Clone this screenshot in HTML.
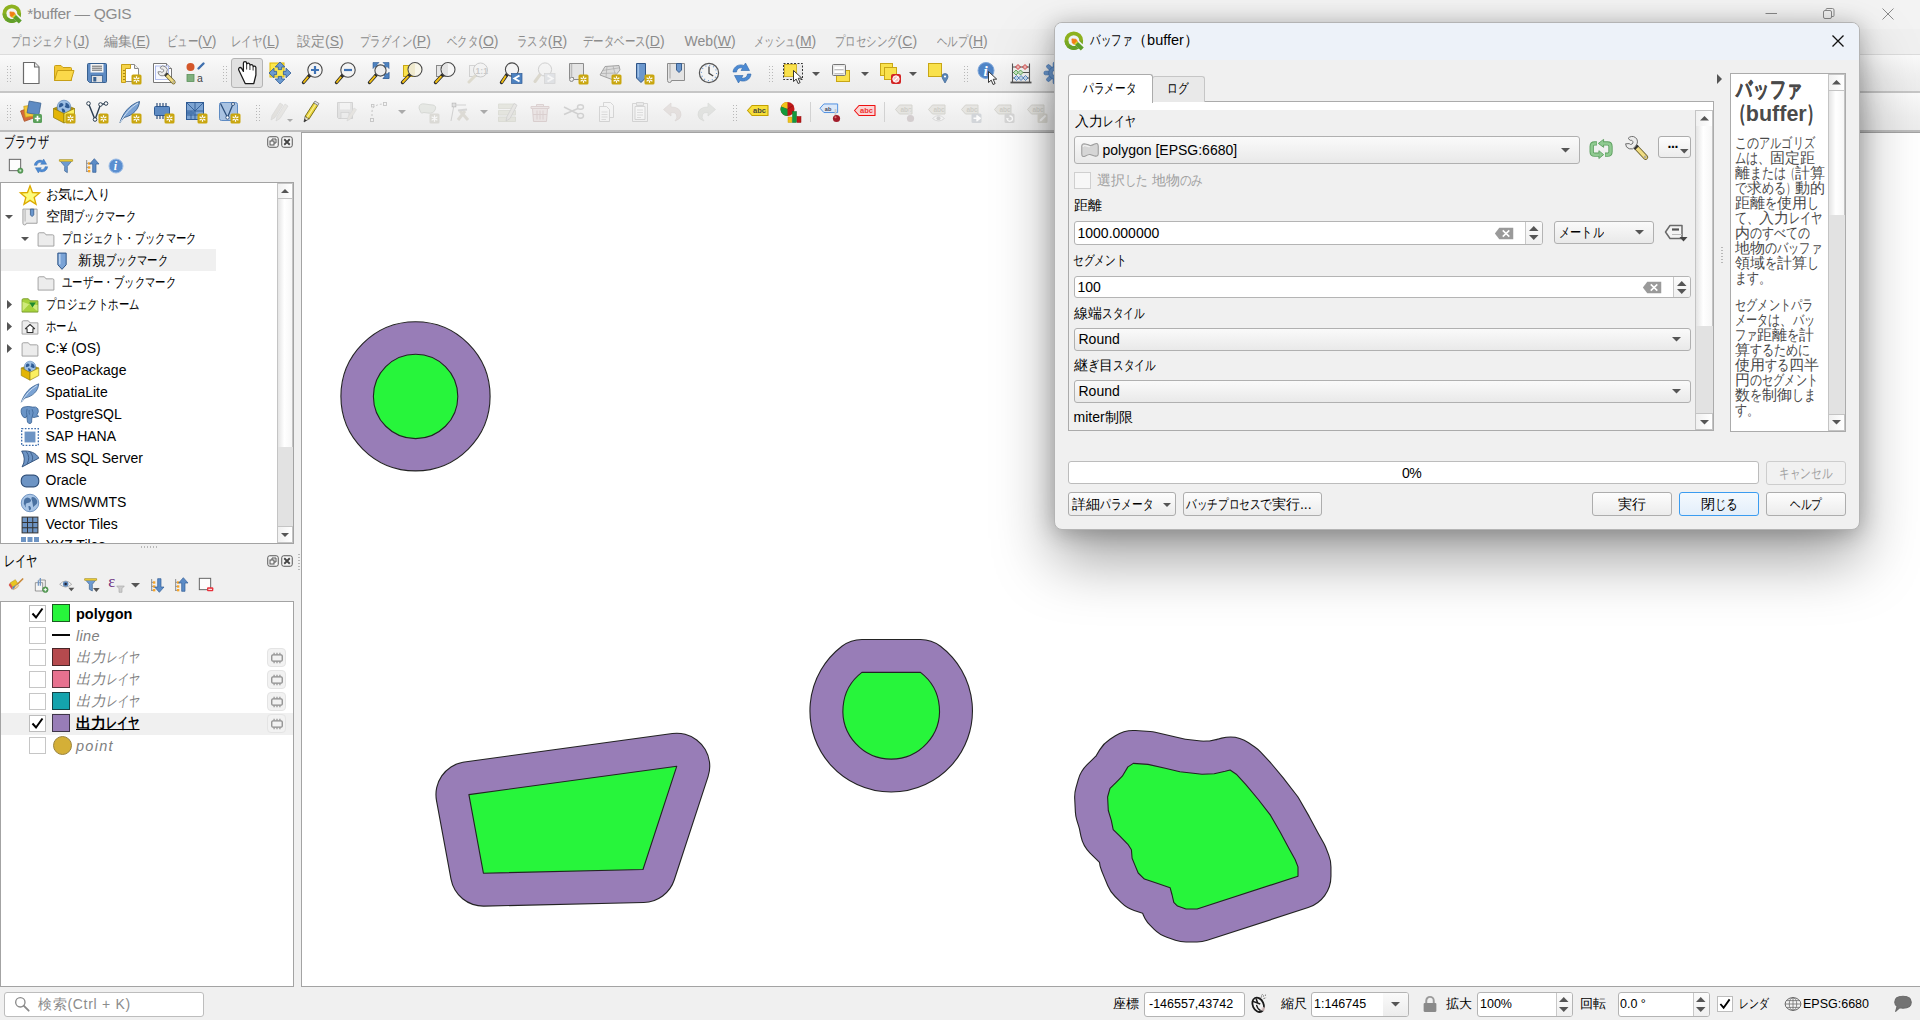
<!DOCTYPE html>
<html lang="ja"><head><meta charset="utf-8"><title>*buffer — QGIS</title>
<style>
html,body{margin:0;padding:0;width:1920px;height:1020px;overflow:hidden;background:#f0f0f0;
 font-family:"Liberation Sans",sans-serif;font-size:14px;color:#000}
.b{position:absolute;box-sizing:border-box}
.t{position:absolute;white-space:nowrap;line-height:20px;height:20px;margin:-1px 0 0 -1px}
.i{position:absolute;overflow:visible}
.k,.h,.p{display:inline-block;transform-origin:0 50%}
.k{transform:scaleX(var(--ks,.76));margin-right:calc((var(--ks,.76) - 1)*var(--n)*1em)}
.h{transform:scaleX(var(--hs,.82));margin-right:calc((var(--hs,.82) - 1)*var(--n)*1em)}
.p{transform:scaleX(.6);margin-right:-.4em}
.mn{--ks:.745}
.tr{--ks:.74;--hs:.885}
.dk,.lb,.li,.lbu{font-size:14.5px;--ks:.745}
.st{font-size:12.5px;--ks:.76}
.lb{font-weight:bold}
.li{font-style:italic;color:#808080}
.lbu,.lbu .k{font-weight:bold;text-decoration:underline}
.dt{font-size:14.5px;--ks:.70}
.dt .p{transform:none;margin-right:0}
.hh{font-size:21.5px;font-weight:bold;color:#4a4a4a;line-height:24px;height:24px;--ks:.70}
.hh .k,.hh .p{font-size:23px;-webkit-text-stroke:.45px #4a4a4a}
.hp{color:#4a4a4a;font-size:14.5px;line-height:15px;height:15px;--ks:.745;--hs:.80}
.hd{position:absolute;width:5px;background-image:radial-gradient(circle,#b8b8b8 0.8px,transparent 1px);background-size:3px 3px}
.gray{color:#8c8c8c}
.dis{color:#a0a0a0}
.btn{border:1px solid #adadad;border-radius:3px;background:linear-gradient(#fdfdfd,#ececec)}
.inp{border:1px solid #b4b4b4;border-radius:3px;background:#fff}
.cmb{border:1px solid #b0b0b0;border-radius:3px;background:linear-gradient(#fafafa,#e9e9e9)}
.sb{background:linear-gradient(90deg,#e4e4e4,#fff 45%,#f6f6f6);border-left:1px solid #c4c4c4;border-right:1px solid #c4c4c4}
.sbt{background:#e2e2e2}
.sbb{background:linear-gradient(90deg,#f0f0f0,#fff);border:1px solid #c4c4c4}
.ck{border:1px solid #b9b9b9;background:#fff}
.ctr{text-align:center}
</style></head><body>

<div class="b " style="left:0px;top:0px;width:1920px;height:29px;background:#f3f3f3"></div>
<svg class="i" style="left:0px;top:2px;" width="24" height="24" viewBox="0 0 24 24"><circle cx="11.800" cy="11.700" r="7.400" fill="none" stroke="#8db11f" stroke-width="3.800"/><path d="M4.400 11.700A7.400 7.400 0 0 0 19.200 11.700" fill="none" stroke="#78a824" stroke-width="3.800"/><path d="M6.600 16.900A7.400 7.400 0 0 0 17 16.900" fill="none" stroke="#62a02a" stroke-width="3.800"/><path d="M14.500 13.200L21.600 20.200" stroke="#f3f4f5" stroke-width="5.800"/><path d="M14 13.900L20.300 20.100" stroke="#5c9e2a" stroke-width="4.200"/><path d="M9.900 9.900L14 10.300 15.300 12.300 12.300 15.300 10.300 14Z" fill="#f07f13" stroke="#f07f13" stroke-width="0.800" stroke-linejoin="round"/><path d="M15.400 12.700L12.700 15.400" stroke="#d9d62e" stroke-width="1.400"/></svg>
<div class="t gray" style="left:28.3px;top:4.5px;font-size:15.5px;letter-spacing:-0.3px">*buffer — QGIS</div>
<svg class="i" style="left:1760px;top:4px" width="140" height="22" viewBox="0 0 140 22" fill="none" stroke="#8a8a8a" stroke-width="1"><path d="M5.5 9.5H17"/><rect x="63.5" y="6.5" width="8" height="8" rx="1.5"/><path d="M66 6.5V5.5Q66 4.5 67 4.5H72.5Q74 4.5 74 6V11.5Q74 12.5 73 12.5H72"/><path d="M122.5 4.5L133.5 15.5M133.5 4.5L122.5 15.5"/></svg>
<div class="b " style="left:0px;top:29px;width:1920px;height:25px;background:#f0f0f0"></div>
<div class="t gray mn" style="left:11.5px;top:31.5px;"><span class="k" style="--n:6">プロジェクト</span>(<u>J</u>)</div>
<div class="t gray mn" style="left:104.5px;top:31.5px;">編集(<u>E</u>)</div>
<div class="t gray mn" style="left:167.5px;top:31.5px;"><span class="k" style="--n:3">ビュー</span>(<u>V</u>)</div>
<div class="t gray mn" style="left:232px;top:31.5px;"><span class="k" style="--n:3">レイヤ</span>(<u>L</u>)</div>
<div class="t gray mn" style="left:298px;top:31.5px;">設定(<u>S</u>)</div>
<div class="t gray mn" style="left:361px;top:31.5px;"><span class="k" style="--n:5">プラグイン</span>(<u>P</u>)</div>
<div class="t gray mn" style="left:448px;top:31.5px;"><span class="k" style="--n:3">ベクタ</span>(<u>O</u>)</div>
<div class="t gray mn" style="left:517.5px;top:31.5px;"><span class="k" style="--n:3">ラスタ</span>(<u>R</u>)</div>
<div class="t gray mn" style="left:583.5px;top:31.5px;"><span class="k" style="--n:6">データベース</span>(<u>D</u>)</div>
<div class="t gray mn" style="left:685.5px;top:31.5px;">Web(<u>W</u>)</div>
<div class="t gray mn" style="left:754.5px;top:31.5px;"><span class="k" style="--n:4">メッシュ</span>(<u>M</u>)</div>
<div class="t gray mn" style="left:836px;top:31.5px;"><span class="k" style="--n:6">プロセシング</span>(<u>C</u>)</div>
<div class="t gray mn" style="left:938px;top:31.5px;"><span class="k" style="--n:3">ヘルプ</span>(<u>H</u>)</div>
<div class="b " style="left:0px;top:54px;width:1920px;height:39px;background:linear-gradient(#fafafa,#f0f0f0 60%,#ececec);border-top:1px solid #dcdcdc;border-bottom:2px solid #c6c6c6"></div>
<div class="b " style="left:0px;top:93px;width:1920px;height:39px;background:linear-gradient(#fafafa,#f0f0f0 60%,#ececec);border-bottom:2px solid #bdbdbd"></div>
<div class="hd" style="left:6px;top:65px;height:17px"></div>
<div class="hd" style="left:222px;top:65px;height:17px"></div>
<div class="hd" style="left:768px;top:65px;height:17px"></div>
<div class="hd" style="left:963px;top:65px;height:17px"></div>
<div class="b " style="left:231px;top:58px;width:32px;height:30px;background:#e1e1e1;border:1px solid #b4b4b4;border-radius:3px"></div>
<svg class="i" style="left:19px;top:61px;" width="24" height="24" viewBox="0 0 24 24"><path d="M4.500 1.500H15.500L20 6V22.500H4.500Z" fill="#fff" stroke="#6a6a6a" stroke-width="1.2" stroke-linejoin="round"/><path d="M15.500 1.500V6H20" fill="#ececec" stroke="#6a6a6a" stroke-width="1.100" stroke-linejoin="round"/></svg>
<svg class="i" style="left:52px;top:61px;" width="24" height="24" viewBox="0 0 24 24"><path d="M2.5 5.5Q2.5 4.5 3.5 4.5H9L11 6.5H18.5Q19.5 6.5 19.5 7.5V19.5H2.5Z" fill="#f3c832" stroke="#c79f16" stroke-width="1"/><path d="M2.5 19.5L5.5 9.5H22L19 19.5Z" fill="#fbd94a" stroke="#c79f16" stroke-width="1" stroke-linejoin="round"/></svg>
<svg class="i" style="left:85px;top:61px;" width="24" height="24" viewBox="0 0 24 24"><path d="M3.5 2.5H20.5Q21.5 2.5 21.5 3.5V20.5Q21.5 21.5 20.5 21.5H4.5L2.5 19.5V3.5Q2.5 2.5 3.5 2.5Z" fill="#5e8bc3" stroke="#38608f" stroke-width="1"/><rect x="5.5" y="3" width="13" height="8.5" fill="#f4f4f4"/><path d="M7 5.2H17M7 7.2H17M7 9.2H17" stroke="#555" stroke-width="0.9"/><rect x="6.5" y="14.5" width="11" height="7" fill="#e3e3e3" stroke="#38608f" stroke-width="0.8"/><rect x="8.3" y="16" width="3" height="4.5" fill="#38608f"/></svg>
<svg class="i" style="left:118px;top:61px;" width="24" height="24" viewBox="0 0 24 24"><path d="M6.5 3.5H16.5L20.5 7.5V20.5H6.5Z" fill="#fff" stroke="#8a8a8a" stroke-width="1"/><path d="M16.5 3.5V7.5H20.5" fill="#eee" stroke="#8a8a8a"/><path d="M3.5 3.5H12.5V7.5H7.5V21.5H3.5Z" fill="#f6d44a" stroke="#c79f16" stroke-width="1"/><path d="M5 9.5H7M5 12.5H7M5 15.5H7M5 18.5H7" stroke="#a07e10" stroke-width="0.9"/><rect x="13.5" y="13.5" width="10" height="10" rx="1.6" fill="#c9a60f"/><path d="M18.5 15.2V21.8M15.6 16.8L21.4 20.2M21.4 16.8L15.6 20.2" stroke="#fff" stroke-width="1.3"/><circle cx="18.5" cy="18.5" r="1" fill="#c9a60f"/></svg>
<svg class="i" style="left:151px;top:61px;" width="24" height="24" viewBox="0 0 24 24"><path d="M2.5 2.5H15.5L20.5 7.5V21.5H2.5Z" fill="#fff" stroke="#777" stroke-width="1"/><path d="M15.5 2.5V7.5H20.5" fill="#eee" stroke="#777" stroke-width="1" stroke-linejoin="round"/><rect x="4.5" y="5" width="13" height="13.5" fill="#f6f8ff" stroke="#aab8ee" stroke-width="0.9"/><g transform="translate(6.5,5.5) scale(.78)"><path d="M11.6 10.8L20.6 20.2" stroke="#6b5f2a" stroke-width="5.2" stroke-linecap="round"/><path d="M11.6 10.8L20.6 20.2" stroke="#f0dc82" stroke-width="3.4" stroke-linecap="round"/><path d="M10 9.2L12 11.2" stroke="#333" stroke-width="5.2"/><circle cx="20.3" cy="19.9" r="0.9" fill="#d9d9d9" stroke="#777" stroke-width="0.5"/><path d="M3.1 1.4A5.2 5.2 0 0 1 11.3 8L10 9.9A5.2 5.2 0 0 1 0.6 6.8L4.2 6.6A2.1 2.1 0 1 0 5.2 3.3Z" fill="#ececec" stroke="#6e6e6e" stroke-width="1" stroke-linejoin="round"/></g></svg>
<svg class="i" style="left:184px;top:61px;" width="24" height="24" viewBox="0 0 24 24"><circle cx="6.5" cy="6" r="4" fill="#d4572a"/><path d="M14.5 7.5L19.5 2.5" stroke="#3f6fae" stroke-width="2.4" stroke-linecap="round"/><rect x="3" y="13.5" width="7" height="7" fill="#7fb07d" stroke="#5b915a" stroke-width="0.8"/><text x="13" y="20.5" font-family="Liberation Sans,sans-serif" font-size="10.5" fill="#444">a</text></svg>
<svg class="i" style="left:235px;top:61px;" width="24" height="24" viewBox="0 0 24 24"><path d="M10.2 22.5L4 9.5Q3 7.800 4.600 6.600Q5.800 6.200 6.600 7.400L8.400 10.400V2Q8.400 0.500 10 0.500Q11.600 0.500 11.600 2V3Q13.600 1.200 14.900 3.400V4.200Q16.900 2.600 18.100 4.800V5.600Q20 4.400 20.900 6.400V14L18.800 22.500Z" fill="#fff" stroke="#1a1a1a" stroke-width="1.25" stroke-linejoin="round"/><path d="M11.600 3V8.500M14.900 4.400V9M18.100 5.800V9.500" stroke="#444" stroke-width="1.1"/></svg>
<svg class="i" style="left:268px;top:61px;" width="24" height="24" viewBox="0 0 24 24"><rect x="2" y="2" width="14" height="14" fill="#fbe74d" stroke="#e0b800" stroke-width="1"/><g fill="#6c9bd0" stroke="#2f5b94" stroke-width="0.8" stroke-linejoin="round"><path d="M12 1L16.800 6H13.700V8.600H10.300V6H7.200Z"/><path d="M12 23L16.800 18H13.700V15.400H10.300V18H7.200Z"/><path d="M1 12L6 7.200V10.300H8.600V13.700H6V16.800Z"/><path d="M23 12L18 7.200V10.300H15.400V13.700H18V16.800Z"/></g></svg>
<svg class="i" style="left:301px;top:61px;" width="24" height="24" viewBox="0 0 24 24"><path d="M8.816 14.184L2.5 21.5" stroke="#2b2b2b" stroke-width="3.4" stroke-linecap="round"/><path d="M7.52 15.48L3 21" stroke="#f3c012" stroke-width="1.9" stroke-linecap="round"/><path d="M9.68 13.32L7.16 15.84" stroke="#2b2b2b" stroke-width="2.6"/><circle cx="14" cy="9" r="7.2" fill="#f4f4f4" stroke="#4a4a4a" stroke-width="1.1"/><path d="M14 5V13M10 9H18" stroke="#3f73b5" stroke-width="2.2"/></svg>
<svg class="i" style="left:334px;top:61px;" width="24" height="24" viewBox="0 0 24 24"><path d="M8.816 14.184L2.5 21.5" stroke="#2b2b2b" stroke-width="3.4" stroke-linecap="round"/><path d="M7.52 15.48L3 21" stroke="#f3c012" stroke-width="1.9" stroke-linecap="round"/><path d="M9.68 13.32L7.16 15.84" stroke="#2b2b2b" stroke-width="2.6"/><circle cx="14" cy="9" r="7.2" fill="#f4f4f4" stroke="#4a4a4a" stroke-width="1.1"/><path d="M10 9H18" stroke="#3f73b5" stroke-width="2.2"/></svg>
<svg class="i" style="left:367px;top:61px;" width="24" height="24" viewBox="0 0 24 24"><g fill="#4d82c0" stroke="#2f5b94" stroke-width="0.6"><path d="M6 1.5H12L10 3.5 12.5 6 10.5 8 8 5.5 6 7.5Z"/><path d="M22 1.5H16L18 3.5 15.5 6 17.5 8 20 5.5 22 7.5Z"/><path d="M22 17.5H16L18 15.5 15.5 13 17.5 11 20 13.5 22 11.5Z" transform="translate(0,0)"/><path d="M22 17.5V11.5L20 13.5 17.5 11 15.5 13 18 15.5 16 17.5Z"/></g><path d="M9.468 13.532L2.5 21.5" stroke="#2b2b2b" stroke-width="3.4" stroke-linecap="round"/><path d="M8.46 14.54L3 21" stroke="#f3c012" stroke-width="1.9" stroke-linecap="round"/><path d="M10.14 12.86L8.18 14.82" stroke="#2b2b2b" stroke-width="2.6"/><circle cx="13.5" cy="9.5" r="5.6" fill="#ededed" stroke="#4a4a4a" stroke-width="1.1"/></svg>
<svg class="i" style="left:400px;top:61px;" width="24" height="24" viewBox="0 0 24 24"><rect x="3.5" y="4.5" width="11" height="11" fill="#f9e14b" stroke="#c8a616" stroke-width="1"/><path d="M9.96 13.54L2.5 21.5" stroke="#2b2b2b" stroke-width="3.4" stroke-linecap="round"/><path d="M8.7 14.8L3 21" stroke="#f3c012" stroke-width="1.9" stroke-linecap="round"/><path d="M10.8 12.7L8.35 15.15" stroke="#2b2b2b" stroke-width="2.6"/><circle cx="15" cy="8.5" r="7" fill="#f8f6ea" stroke="#4a4a4a" stroke-width="1.1"/><path d="M15 2.3A6.2 6.2 0 0 0 15 14.7Z" fill="#ece6c4" opacity=".8"/></svg>
<svg class="i" style="left:433px;top:61px;" width="24" height="24" viewBox="0 0 24 24"><rect x="3.5" y="4.5" width="11" height="11" fill="#e6e6e6" stroke="#8a8a8a" stroke-width="1"/><path d="M9.96 13.54L2.5 21.5" stroke="#2b2b2b" stroke-width="3.4" stroke-linecap="round"/><path d="M8.7 14.8L3 21" stroke="#f3c012" stroke-width="1.9" stroke-linecap="round"/><path d="M10.8 12.7L8.35 15.15" stroke="#2b2b2b" stroke-width="2.6"/><circle cx="15" cy="8.5" r="7" fill="#f6f6f6" stroke="#4a4a4a" stroke-width="1.1"/><path d="M15 2.3A6.2 6.2 0 0 0 15 14.7Z" fill="#dedede" opacity=".8"/></svg>
<svg class="i" style="left:466px;top:61px;" width="24" height="24" viewBox="0 0 24 24"><g opacity=".45"><rect x="3.5" y="4.5" width="11" height="11" fill="#eee" stroke="#aaa" stroke-width="1"/><path d="M9 15L3 21" stroke="#c9c2a8" stroke-width="3" stroke-linecap="round"/><circle cx="14.5" cy="9" r="7" fill="#f2f2f2" stroke="#999" stroke-width="1"/><text x="9.6" y="12.5" font-family="Liberation Sans,sans-serif" font-weight="bold" font-size="8.5" fill="#999">1:1</text></g></svg>
<svg class="i" style="left:499px;top:61px;" width="24" height="24" viewBox="0 0 24 24"><path d="M8.248 13.252L2.5 21.5" stroke="#2b2b2b" stroke-width="3.4" stroke-linecap="round"/><path d="M7.06 14.44L3 21" stroke="#f3c012" stroke-width="1.9" stroke-linecap="round"/><path d="M9.04 12.46L6.73 14.77" stroke="#2b2b2b" stroke-width="2.6"/><circle cx="13" cy="8.5" r="6.6" fill="#f4f4f4" stroke="#4a4a4a" stroke-width="1.1"/><rect x="12.5" y="12.5" width="10.5" height="10" fill="#4d82c0" stroke="#2f5b94" stroke-width="0.7"/><path d="M20.5 14.5L15.5 17.5 20.5 20.5" stroke="#fff" stroke-width="2" fill="none"/></svg>
<svg class="i" style="left:532px;top:61px;" width="24" height="24" viewBox="0 0 24 24"><g opacity=".4"><path d="M8.5 13L3 20.5" stroke="#bdb59a" stroke-width="3" stroke-linecap="round"/><circle cx="13" cy="8.5" r="6.6" fill="#f3f3f3" stroke="#999" stroke-width="1"/><rect x="12.5" y="12.5" width="10.5" height="10" fill="#c9ced6" stroke="#aaa" stroke-width="0.7"/><path d="M15.5 14.5L20.5 17.5 15.5 20.5" stroke="#fff" stroke-width="2" fill="none"/></g></svg>
<svg class="i" style="left:565px;top:61px;" width="24" height="24" viewBox="0 0 24 24"><path d="M4.5 2.5H18.5V18.5H8.5Q8.5 20.5 6.5 20.5Q4.5 20.5 4.5 18.5Z" fill="#e4e4e4" stroke="#8c8c8c" stroke-width="1"/><path d="M4.5 18.5Q4.5 16.5 6.5 16.5H8.5V18.5" fill="#f4f4f4" stroke="#8c8c8c"/><path d="M6.5 3V16" stroke="#bbb" stroke-width="1.5"/><rect x="13.5" y="13.5" width="10" height="10" rx="1.6" fill="#c9a60f"/><path d="M18.5 15.2V21.8M15.6 16.8L21.4 20.2M21.4 16.8L15.6 20.2" stroke="#fff" stroke-width="1.3"/><circle cx="18.5" cy="18.5" r="1" fill="#c9a60f"/></svg>
<svg class="i" style="left:598px;top:61px;" width="24" height="24" viewBox="0 0 24 24"><path d="M2 14L7 5.5 21 4.5 22 9 14 18.5Z" fill="#dcdcdc" stroke="#9a9a9a" stroke-width="0.9"/><path d="M4.5 9.5L21.5 6.8M3 12.5L18 12M9 5.3L8 16M15 4.9L17.5 14.5" stroke="#aaa" stroke-width="0.7" fill="none"/><rect x="13.5" y="13.5" width="10" height="10" rx="1.6" fill="#c9a60f"/><path d="M18.5 15.2V21.8M15.6 16.8L21.4 20.2M21.4 16.8L15.6 20.2" stroke="#fff" stroke-width="1.3"/><circle cx="18.5" cy="18.5" r="1" fill="#c9a60f"/></svg>
<svg class="i" style="left:631px;top:61px;" width="24" height="24" viewBox="0 0 24 24"><path d="M5.5 2.5H14.5V17L10 21.5 5.5 17Z" fill="#6b97cd" stroke="#2f5587" stroke-width="1"/><path d="M7.3 3.2V16.3" stroke="#9fc0e6" stroke-width="1.6"/><rect x="13.5" y="13.5" width="10" height="10" rx="1.6" fill="#c9a60f"/><path d="M18.5 15.2V21.8M15.6 16.8L21.4 20.2M21.4 16.8L15.6 20.2" stroke="#fff" stroke-width="1.3"/><circle cx="18.5" cy="18.5" r="1" fill="#c9a60f"/></svg>
<svg class="i" style="left:664px;top:61px;" width="24" height="24" viewBox="0 0 24 24"><path d="M3.5 2.5H20.5V19.5H7.5Q7.5 21.5 5.5 21.5Q3.5 21.5 3.5 19.5Z" fill="#e4e4e4" stroke="#8c8c8c" stroke-width="1"/><path d="M6 3V17.5" stroke="#bbb" stroke-width="1.6"/><path d="M12.5 2.5H17.5V9L15 11.5 12.5 9Z" fill="#6b97cd" stroke="#2f5587" stroke-width="0.9"/></svg>
<svg class="i" style="left:697px;top:61px;" width="24" height="24" viewBox="0 0 24 24"><circle cx="12" cy="12" r="9.6" fill="#f4f4f4" stroke="#555" stroke-width="1.2"/><circle cx="12" cy="12" r="7.6" fill="none" stroke="#6b97cd" stroke-width="1.2" stroke-dasharray="1 2.98"/><path d="M12 5.5V12.3L16.2 15" stroke="#444" stroke-width="1.3" fill="none"/></svg>
<svg class="i" style="left:730px;top:61px;" width="24" height="24" viewBox="0 0 24 24"><g fill="#4c8ad3" stroke="#2f66a8" stroke-width="0.6" stroke-linejoin="round"><path d="M3 11C3.5 5.5 9 2.5 14 4.5L15.5 2 19.5 9.5 11 9.5 12.5 7.2C9.5 6 6.8 8 6.5 11Z"/><path d="M21 13C20.5 18.5 15 21.5 10 19.5L8.5 22 4.5 14.5 13 14.5 11.5 16.8C14.5 18 17.2 16 17.5 13Z"/></g></svg>
<svg class="i" style="left:781px;top:61px;" width="24" height="24" viewBox="0 0 24 24"><rect x="2.5" y="2.5" width="19" height="16" fill="#e9e9e9" stroke="#333" stroke-width="1" stroke-dasharray="2 1.5"/><rect x="3.5" y="3.5" width="12" height="12" fill="#f9e14b" stroke="#c8a616" stroke-width="0.8"/><g transform="translate(12.5,9.5)"><path d="M0 0L0 11 2.7 8.6 4.6 13 6.6 12.1 4.7 7.8 8.2 7.6Z" fill="#fff" stroke="#222" stroke-width="0.9" stroke-linejoin="round"/></g></svg>
<svg class="i" style="left:812px;top:71.5px" width="8" height="4" viewBox="0 0 8 4"><path d="M0 0H8L4 4Z" fill="#555"/></svg>
<svg class="i" style="left:829px;top:61px;" width="24" height="24" viewBox="0 0 24 24"><rect x="7.5" y="9.5" width="13" height="11" fill="#f9e14b" stroke="#c8a616" stroke-width="1"/><rect x="3.5" y="3.5" width="13" height="11" rx="1" fill="#e8e8e8" stroke="#777" stroke-width="1"/><path d="M5.5 7H14.5M5.5 11H14.5" stroke="#fff" stroke-width="2.6"/><path d="M5.5 7H14.5M5.5 11H14.5" stroke="#999" stroke-width="0.6" fill="none" transform="translate(0,1.6)"/></svg>
<svg class="i" style="left:860.5px;top:71.5px" width="8" height="4" viewBox="0 0 8 4"><path d="M0 0H8L4 4Z" fill="#555"/></svg>
<svg class="i" style="left:878px;top:61px;" width="24" height="24" viewBox="0 0 24 24"><rect x="2.5" y="2.5" width="12" height="12" fill="#f9e14b" stroke="#c8a616" stroke-width="1"/><rect x="6.5" y="6.5" width="12" height="12" fill="#f9e14b" stroke="#c8a616" stroke-width="1"/><rect x="13" y="13" width="10" height="10" rx="2" fill="#d32424"/><circle cx="18" cy="18" r="3.2" fill="#f5c0c0" stroke="#fff" stroke-width="1"/><path d="M15.8 20.2L20.2 15.8" stroke="#fff" stroke-width="1.2"/></svg>
<svg class="i" style="left:908.5px;top:71.5px" width="8" height="4" viewBox="0 0 8 4"><path d="M0 0H8L4 4Z" fill="#555"/></svg>
<svg class="i" style="left:925.5px;top:61px;" width="24" height="24" viewBox="0 0 24 24"><rect x="2.5" y="2.5" width="13" height="13" fill="#f9e14b" stroke="#c8a616" stroke-width="1"/><path d="M19 22C17 18.5 16 17 16 15.5A3 3 0 0 1 22 15.5C22 17 21 18.5 19 22Z" fill="#5b87b8" stroke="#3b6393" stroke-width="0.7"/><circle cx="19" cy="15.5" r="1.1" fill="#fff"/></svg>
<svg class="i" style="left:975.5px;top:61px;" width="24" height="24" viewBox="0 0 24 24"><circle cx="10" cy="9.5" r="8" fill="#4f84c6" stroke="#7ea6da" stroke-width="1"/><text x="7.6" y="15" font-family="Liberation Serif,serif" font-style="italic" font-weight="bold" font-size="15" fill="#fff">i</text><g transform="translate(12.5,10.5)"><path d="M0 0L0 11 2.7 8.6 4.6 13 6.6 12.1 4.7 7.8 8.2 7.6Z" fill="#fff" stroke="#222" stroke-width="0.9" stroke-linejoin="round"/></g></svg>
<svg class="i" style="left:1009px;top:61px;" width="24" height="24" viewBox="0 0 24 24"><path d="M3.5 2.5V21M20.5 2.5V21M3.5 6H20.5M3.5 11.5H20.5M3.5 17H20.5" stroke="#555" stroke-width="1.1" fill="none"/><path d="M1.5 21.5H22.5" stroke="#555" stroke-width="1.8"/><g stroke-width="0.8"><g fill="#f0b6b6" stroke="#c22"><path d="M9 3.5L11.5 6 9 8.5 6.5 6Z"/><path d="M16 3.5L18.5 6 16 8.5 13.5 6Z"/></g><g fill="#c4e6c0" stroke="#4a9a44"><path d="M7 9L9.5 11.5 7 14 4.5 11.5Z"/><path d="M11.5 9L14 11.5 11.5 14 9 11.5Z"/></g><g fill="#c3d9ef" stroke="#3f73b5"><path d="M7.5 14.5L10 17 7.5 19.5 5 17Z"/><path d="M12 14.5L14.5 17 12 19.5 9.5 17Z"/><path d="M16.5 14.5L19 17 16.5 19.5 14 17Z"/></g></g></svg>
<svg class="i" style="left:1042px;top:61px;" width="24" height="24" viewBox="0 0 24 24"><g transform="translate(13,12)"><g fill="#6d9ad1" stroke="#3f73b5" stroke-width="0.7"><rect x="-1.8" y="-11" width="3.6" height="22" rx="1.5"/><rect x="-1.8" y="-11" width="3.6" height="22" rx="1.5" transform="rotate(45)"/><rect x="-1.8" y="-11" width="3.6" height="22" rx="1.5" transform="rotate(90)"/><rect x="-1.8" y="-11" width="3.6" height="22" rx="1.5" transform="rotate(135)"/></g><circle r="6.3" fill="#6d9ad1" stroke="#3f73b5" stroke-width="0.7"/><circle r="2.8" fill="#f2f2f2" stroke="#3f73b5" stroke-width="0.7"/></g></svg>
<div class="hd" style="left:6px;top:104px;height:17px"></div>
<div class="hd" style="left:255px;top:104px;height:17px"></div>
<div class="hd" style="left:732px;top:104px;height:17px"></div>
<svg class="i" style="left:19px;top:100px;" width="24" height="24" viewBox="0 0 24 24"><rect x="3" y="9" width="11" height="11" fill="#d46a3a" stroke="#a94c22" stroke-width="0.7" transform="rotate(-20 8 14)"/><rect x="5.5" y="5.5" width="11" height="11" fill="#f5c83a" stroke="#c79f16" stroke-width="0.7" transform="rotate(-8 11 11)"/><rect x="9" y="2" width="12" height="12" fill="#5e8bc3" stroke="#38608f" stroke-width="0.7" transform="rotate(10 15 8)"/><rect x="14" y="14" width="9" height="9" rx="1.5" fill="#5aa05a"/><path d="M18.5 15.7V21.3M15.7 18.5H21.3" stroke="#fff" stroke-width="1.7"/></svg>
<svg class="i" style="left:52px;top:100px;" width="24" height="24" viewBox="0 0 24 24"><path d="M1.500 8.500L12 4.500 22.500 8.500 12 13.500Z" fill="#b8930c" stroke="#94800f" stroke-width="0.8" stroke-linejoin="round"/><circle cx="12" cy="7" r="6.800" fill="#9dbfe4" stroke="#5e86b8" stroke-width="0.7"/><path d="M7.500 3.800Q9.500 2.300 11 3.800T9.500 6.800 7 6ZM13.500 2.800Q16.500 3 17.500 6T15 8 13.500 5.500ZM9.500 8.800Q12 8 13 10.500T10.500 12.500Z" fill="#2f5b94"/><path d="M1.500 8.500L12 13.500V23L1.500 17.500Z" fill="#e3b505" stroke="#94800f" stroke-width="0.8" stroke-linejoin="round"/><path d="M22.500 8.500L12 13.500V23L22.500 17.500Z" fill="#fbef60" stroke="#94800f" stroke-width="0.8" stroke-linejoin="round"/><rect x="13.5" y="13.5" width="10" height="10" rx="1.6" fill="#c9a60f"/><path d="M18.5 15.2V21.8M15.6 16.8L21.4 20.2M21.4 16.8L15.6 20.2" stroke="#fff" stroke-width="1.3"/><circle cx="18.5" cy="18.5" r="1" fill="#c9a60f"/></svg>
<svg class="i" style="left:85px;top:100px;" width="24" height="24" viewBox="0 0 24 24"><path d="M3.5 3.5L10 19.5 15.5 4.5 21 3.5" fill="none" stroke="#2c3e50" stroke-width="1.4"/><g fill="#fff" stroke="#2c3e50" stroke-width="1"><circle cx="3.5" cy="3.5" r="1.8"/><circle cx="10" cy="19.5" r="1.8"/><circle cx="15.5" cy="4.5" r="1.8"/><circle cx="21" cy="3.5" r="1.8"/></g><rect x="13.5" y="13.5" width="10" height="10" rx="1.6" fill="#c9a60f"/><path d="M18.5 15.2V21.8M15.6 16.8L21.4 20.2M21.4 16.8L15.6 20.2" stroke="#fff" stroke-width="1.3"/><circle cx="18.5" cy="18.5" r="1" fill="#c9a60f"/></svg>
<svg class="i" style="left:118px;top:100px;" width="24" height="24" viewBox="0 0 24 24"><path d="M2 22.5C5 13 11 5 21.5 1.5C21 9 15 15.5 6 17.5Z" fill="#7ba3d4" stroke="#345c8c" stroke-width="0.9" stroke-linejoin="round"/><path d="M2.5 22C7 14 12 8 20 3" stroke="#d8e6f5" stroke-width="1" fill="none"/><rect x="13.5" y="13.5" width="10" height="10" rx="1.6" fill="#c9a60f"/><path d="M18.5 15.2V21.8M15.6 16.8L21.4 20.2M21.4 16.8L15.6 20.2" stroke="#fff" stroke-width="1.3"/><circle cx="18.5" cy="18.5" r="1" fill="#c9a60f"/></svg>
<svg class="i" style="left:151px;top:100px;" width="24" height="24" viewBox="0 0 24 24"><rect x="3.5" y="6.5" width="15" height="9" rx="1" fill="#5e8bc3" stroke="#2f5b94" stroke-width="1"/><path d="M6 3V6.5M9 3V6.5M12 3V6.5M15 3V6.5M6 15.5V19M9 15.5V19M12 15.5V19" stroke="#2f4f7a" stroke-width="1.2"/><rect x="13.5" y="13.5" width="10" height="10" rx="1.6" fill="#c9a60f"/><path d="M18.5 15.2V21.8M15.6 16.8L21.4 20.2M21.4 16.8L15.6 20.2" stroke="#fff" stroke-width="1.3"/><circle cx="18.5" cy="18.5" r="1" fill="#c9a60f"/></svg>
<svg class="i" style="left:184px;top:100px;" width="24" height="24" viewBox="0 0 24 24"><rect x="2.5" y="2.5" width="17" height="17" fill="#7da4d2" stroke="#2f5b94" stroke-width="1"/><path d="M11 2.5V19.5M2.5 11H19.5M2.5 2.5L11 11M19.5 2.5L11 11M2.5 15H19.5M7 11V19.5" stroke="#2f5b94" stroke-width="0.9" fill="none"/><rect x="3" y="11.5" width="7.5" height="3" fill="#4a78b0"/><rect x="13.5" y="13.5" width="10" height="10" rx="1.6" fill="#c9a60f"/><path d="M18.5 15.2V21.8M15.6 16.8L21.4 20.2M21.4 16.8L15.6 20.2" stroke="#fff" stroke-width="1.3"/><circle cx="18.5" cy="18.5" r="1" fill="#c9a60f"/></svg>
<svg class="i" style="left:217px;top:100px;" width="24" height="24" viewBox="0 0 24 24"><rect x="2.5" y="2.5" width="18" height="18" rx="2" fill="#a9c3e2" stroke="#5e8bc3" stroke-width="1"/><path d="M3.5 3.5L10.5 17.5 16 4" fill="none" stroke="#2c4f7c" stroke-width="1.3"/><g fill="#fff" stroke="#2c4f7c" stroke-width="0.9"><circle cx="10.5" cy="17.5" r="1.7"/><circle cx="16" cy="4" r="1.5"/></g><rect x="13.5" y="13.5" width="10" height="10" rx="1.6" fill="#c9a60f"/><path d="M18.5 15.2V21.8M15.6 16.8L21.4 20.2M21.4 16.8L15.6 20.2" stroke="#fff" stroke-width="1.3"/><circle cx="18.5" cy="18.5" r="1" fill="#c9a60f"/></svg>
<svg class="i" style="left:267px;top:100px;" width="24" height="24" viewBox="0 0 24 24"><g opacity=".5"><path d="M4 20L5 15.5 13 3 16 5 8 17.5Z" fill="#d5d2cc" stroke="#bbb" stroke-width="0.6"/><path d="M9 21L10 16.5 18 4 21 6 13 18.5Z" fill="#dcdad5" stroke="#bbb" stroke-width="0.6"/></g></svg>
<svg class="i" style="left:286.5px;top:119px" width="6" height="3" viewBox="0 0 6 3"><path d="M0 0H6L3 3Z" fill="#aaa"/></svg>
<svg class="i" style="left:300.5px;top:100px;" width="24" height="24" viewBox="0 0 24 24"><path d="M3 22L4.2 16.2 8.2 18.8Z" fill="#e8e0c8" stroke="#555" stroke-width="0.8" stroke-linejoin="round"/><path d="M3 22L3.7 18.9 5.6 20.2Z" fill="#222"/><path d="M4.2 16.2L12.8 2.8 16.8 5.4 8.2 18.8Z" fill="#ebd53a" stroke="#6e6414" stroke-width="0.9" stroke-linejoin="round"/><path d="M6.2 17.4L14.8 4.1" stroke="#f8ef9c" stroke-width="1.1"/><path d="M12.8 2.8L14 1 18 3.6 16.8 5.4Z" fill="#e4e4e4" stroke="#777" stroke-width="0.8"/></svg>
<svg class="i" style="left:334px;top:100px;" width="24" height="24" viewBox="0 0 24 24"><g opacity=".45"><path d="M3.5 2.5H18.5V18.5H4.5L3.5 17.5Z" fill="#cfcfcf" stroke="#aaa" stroke-width="1"/><rect x="6" y="3" width="10" height="6.5" fill="#f1f1f1"/><rect x="7" y="12.5" width="8" height="6" fill="#e6e6e6" stroke="#aaa" stroke-width="0.7"/><path d="M13 21L14 17 20 8 22.5 9.6 16.5 19Z" fill="#d8d4cc" stroke="#bbb" stroke-width="0.6"/></g></svg>
<svg class="i" style="left:367px;top:100px;" width="24" height="24" viewBox="0 0 24 24"><g opacity=".5"><path d="M5 20V12Q5 4 18 4" fill="none" stroke="#999" stroke-width="1" stroke-dasharray="2 2"/><g fill="#f4f4f4" stroke="#999" stroke-width="0.9"><rect x="3.5" y="18.5" width="3" height="3"/><rect x="16.5" y="2.5" width="3" height="3"/><rect x="4.5" y="4.5" width="2.4" height="2.4"/></g></g></svg>
<svg class="i" style="left:398px;top:110px" width="8" height="4" viewBox="0 0 8 4"><path d="M0 0H8L4 4Z" fill="#aaa"/></svg>
<svg class="i" style="left:415.5px;top:100px;" width="24" height="24" viewBox="0 0 24 24"><g opacity=".5"><path d="M3 8Q3 3 9 4T17 5Q21 6 19 10T12 13 6 13 3 8Z" fill="#d9ddd6" stroke="#bcc0b9" stroke-width="1"/><rect x="13.5" y="13.5" width="10" height="10" rx="1.6" fill="#c8c6bd"/><path d="M18.5 15.2V21.8M15.6 16.8L21.4 20.2M21.4 16.8L15.6 20.2" stroke="#fff" stroke-width="1.3"/></g></svg>
<svg class="i" style="left:449px;top:100px;" width="24" height="24" viewBox="0 0 24 24"><g opacity=".5"><path d="M5 5H17M5 5L2 21" stroke="#aaa" stroke-width="0.9" fill="none"/><rect x="3.2" y="3.2" width="3.6" height="3.6" fill="#f4f4f4" stroke="#888" stroke-width="0.9"/><path d="M4.4 4.4L5.6 5.6M5.6 4.4L4.4 5.6" stroke="#888" stroke-width="0.6"/><path d="M9 20L16 11M11 11L19 20" stroke="#c9c5ba" stroke-width="3"/><path d="M9 10.5L18 9.5" stroke="#bbb" stroke-width="2"/></g></svg>
<svg class="i" style="left:479.5px;top:110px" width="8" height="4" viewBox="0 0 8 4"><path d="M0 0H8L4 4Z" fill="#aaa"/></svg>
<svg class="i" style="left:496px;top:100px;" width="24" height="24" viewBox="0 0 24 24"><g opacity=".5"><path d="M2.5 4H19.5V8.5H2.5ZM2.5 10.5H19.5V15H2.5ZM2.5 17H19.5V21.5H2.5Z" fill="#d8d9cc" stroke="#c3c4b6" stroke-width="0.8"/><path d="M10 21L11 16.5 18 3.5 21 5.2 14 18.5Z" fill="#dcdad5" stroke="#aaa" stroke-width="0.7"/></g></svg>
<svg class="i" style="left:528px;top:100px;" width="24" height="24" viewBox="0 0 24 24"><g opacity=".45"><path d="M4.5 8.5H19.5L18.5 21.5H5.5Z" fill="#e2d5d5" stroke="#c0a8a8" stroke-width="1"/><path d="M3 6.5H21V8.5H3ZM8.5 6.5V4.5H15.5V6.5" fill="#e2d5d5" stroke="#c0a8a8" stroke-width="1"/><path d="M9 10.5V19.5M12 10.5V19.5M15 10.5V19.5M5 14.5H19" stroke="#c0a8a8" stroke-width="1"/></g></svg>
<svg class="i" style="left:562px;top:100px;" width="24" height="24" viewBox="0 0 24 24"><g opacity=".45" fill="none" stroke="#aaa" stroke-width="1.4"><path d="M2 7L16 14M2 14.5L16 8.5"/><ellipse cx="18.5" cy="15.8" rx="3" ry="2.4"/><ellipse cx="18.5" cy="7" rx="3" ry="2.2"/></g></svg>
<svg class="i" style="left:594.5px;top:100px;" width="24" height="24" viewBox="0 0 24 24"><g opacity=".45" fill="#f6f6f6" stroke="#aaa" stroke-width="0.9"><path d="M8.5 2.5H15.5L18.5 5.5V17.5H8.5Z"/><path d="M4.5 6.5H11.5L14.5 9.5V21.5H4.5Z"/><path d="M6.5 12H12.5M6.5 14.5H12.5M6.5 17H12.5M6.5 19.5H11" stroke-width="0.7"/></g></svg>
<svg class="i" style="left:628px;top:100px;" width="24" height="24" viewBox="0 0 24 24"><g opacity=".45" fill="#efefef" stroke="#aaa" stroke-width="0.9"><path d="M4.5 3.5H19.5V21.5H4.5Z"/><path d="M8.5 2.5H15.5V5.5H8.5Z" fill="#ddd"/><path d="M7 6.5H17V19.5H7Z" fill="#fafafa"/><path d="M9 10H15M9 12.5H15M9 15H15M9 17.5H13" stroke-width="0.7"/></g></svg>
<svg class="i" style="left:661px;top:100px;" width="24" height="24" viewBox="0 0 24 24"><g opacity=".5"><path d="M2.5 9.5L10 3V7Q20 7 20 15Q20 19 14 21Q17 18 15.5 14.5Q14 12 10 12.5V16Z" fill="#d8cfcc" stroke="#c9bfbc" stroke-width="0.7"/></g></svg>
<svg class="i" style="left:694px;top:100px;" width="24" height="24" viewBox="0 0 24 24"><g opacity=".5"><path d="M21.5 9.5L14 3V7Q4 7 4 15Q4 19 10 21Q7 18 8.5 14.5Q10 12 14 12.5V16Z" fill="#d2d4d0" stroke="#c2c4c0" stroke-width="0.7"/></g></svg>
<svg class="i" style="left:745px;top:98.5px;" width="24" height="24" viewBox="0 0 24 24"><g transform="translate(2.5,2.5)"><path d="M0 9L4.500 4H20.5V14H4.500Z" fill="#f7df3a" stroke="#c4a000" stroke-width="1.1" stroke-linejoin="round"/><text x="5.600" y="11.700" font-family="Liberation Sans,sans-serif" font-weight="bold" font-size="7.500" fill="#4a4a3a">abc</text></g></svg>
<svg class="i" style="left:778px;top:100px;" width="24" height="24" viewBox="0 0 24 24"><circle cx="9.5" cy="9" r="7" fill="#c01818"/><path d="M9.5 9V2A7 7 0 0 0 3 6.4Z" fill="#f0c419"/><path d="M9.5 9L3 6.4A7 7 0 0 0 9.5 16Z" fill="#129a3c"/><path d="M9.5 9L15.5 5.3" stroke="#7a1010" stroke-width="0.6"/><rect x="10" y="17" width="4" height="5.5" fill="#f0c419" stroke="#c79f16" stroke-width="0.5"/><rect x="14.5" y="11.5" width="4" height="11" fill="#129a3c" stroke="#0c6a28" stroke-width="0.5"/><rect x="19" y="16.5" width="4" height="6" fill="#c01818" stroke="#8a0f0f" stroke-width="0.5"/></svg>
<div class="b " style="left:810px;top:102px;width:1px;height:20px;background:#d2d2d2"></div>
<svg class="i" style="left:819px;top:100px;" width="24" height="24" viewBox="0 0 24 24"><g transform="translate(1,0.5) scale(.86)"><path d="M0 9L4.500 4H20.5V14H4.500Z" fill="#dbe8f8" stroke="#4a8de0" stroke-width="1.1" stroke-linejoin="round"/><text x="5.600" y="11.700" font-family="Liberation Sans,sans-serif" font-weight="bold" font-size="6.5" fill="#445">ab</text></g><path d="M16.5 9V16" stroke="#ccc" stroke-width="1.8"/><circle cx="17.5" cy="18.5" r="3.6" fill="#a21d2b"/><circle cx="16.5" cy="17.3" r="1" fill="#d77"/></svg>
<svg class="i" style="left:851.5px;top:98.5px;" width="24" height="24" viewBox="0 0 24 24"><g transform="translate(2.5,2.5)"><path d="M0 9L4.500 4H20.5V14H4.500Z" fill="#fbd5d5" stroke="#ee1111" stroke-width="1.1" stroke-linejoin="round"/><text x="5.600" y="11.700" font-family="Liberation Sans,sans-serif" font-weight="bold" font-size="7.500" fill="#e33">abc</text></g></svg>
<div class="b " style="left:884px;top:102px;width:1px;height:20px;background:#d2d2d2"></div>
<svg class="i" style="left:893px;top:100px;" width="24" height="24" viewBox="0 0 24 24"><g opacity=".75"><g transform="translate(1.5,1)"><path d="M1 8.500L5 4H17.500V13H5Z" fill="#e2e1dc" stroke="#cbcac3" stroke-width="1" stroke-linejoin="round"/><text x="6" y="11" font-family="Liberation Sans,sans-serif" font-weight="bold" font-size="6.500" fill="#c2c1ba">abc</text></g><path d="M16.5 9V16" stroke="#ddd" stroke-width="1.8"/><circle cx="17.5" cy="18.5" r="3.6" fill="#cbc3c5"/></g></svg>
<svg class="i" style="left:925.5px;top:100px;" width="24" height="24" viewBox="0 0 24 24"><g opacity=".75"><g transform="translate(1.5,1)"><path d="M1 8.500L5 4H17.500V13H5Z" fill="#e2e1dc" stroke="#cbcac3" stroke-width="1" stroke-linejoin="round"/><text x="6" y="11" font-family="Liberation Sans,sans-serif" font-weight="bold" font-size="6.500" fill="#c2c1ba">abc</text></g><path d="M6.5 18.5Q12.5 12.5 18.5 18.5Q12.5 23.5 6.5 18.5Z" fill="#f3f3f3" stroke="#cfcfcf" stroke-width="0.9"/><circle cx="12.5" cy="18.3" r="2" fill="#c8c8c8"/></g></svg>
<svg class="i" style="left:959px;top:100px;" width="24" height="24" viewBox="0 0 24 24"><g opacity=".75"><g transform="translate(1.5,1)"><path d="M1 8.500L5 4H17.500V13H5Z" fill="#e2e1dc" stroke="#cbcac3" stroke-width="1" stroke-linejoin="round"/><text x="6" y="11" font-family="Liberation Sans,sans-serif" font-weight="bold" font-size="6.500" fill="#c2c1ba">abc</text></g><rect x="12.5" y="13.5" width="10" height="9.5" rx="1.5" fill="#c9cdd2"/><path d="M14.5 18.2H18V15.7L21.3 18.2 18 20.8V18.2" fill="#fff" stroke="#fff" stroke-width="1.4" stroke-linejoin="round"/></g></svg>
<svg class="i" style="left:992px;top:100px;" width="24" height="24" viewBox="0 0 24 24"><g opacity=".75"><g transform="translate(1.5,1)"><path d="M1 8.500L5 4H17.500V13H5Z" fill="#e2e1dc" stroke="#cbcac3" stroke-width="1" stroke-linejoin="round"/><text x="6" y="11" font-family="Liberation Sans,sans-serif" font-weight="bold" font-size="6.500" fill="#c2c1ba">abc</text></g><rect x="12.5" y="13.5" width="10" height="9.5" rx="1.5" fill="#cfcfcf"/><path d="M15.3 19A2.6 2.6 0 1 0 17.5 16" fill="none" stroke="#fff" stroke-width="1.4"/><path d="M14 18L15.4 20.4 17 18.2Z" fill="#fff"/></g></svg>
<svg class="i" style="left:1025px;top:100px;" width="24" height="24" viewBox="0 0 24 24"><g opacity=".75"><g transform="translate(1.5,1)"><path d="M1 8.500L5 4H17.500V13H5Z" fill="#e2e1dc" stroke="#cbcac3" stroke-width="1" stroke-linejoin="round"/><text x="6" y="11" font-family="Liberation Sans,sans-serif" font-weight="bold" font-size="6.500" fill="#c2c1ba">abc</text></g><rect x="12.5" y="13.5" width="10" height="9.5" rx="1.5" fill="#d3d1c8"/><path d="M14.5 21.5L15.2 19.3 20 14.8 21.3 16.2 16.6 20.9Z" fill="#f6f6f6"/></g></svg>
<div class="t dk" style="left:4.5px;top:132.5px;"><span class="k" style="--n:4">ブラウザ</span></div>
<svg class="i" style="left:266.5px;top:135.5px;" width="12" height="12" viewBox="0 0 24 24"><rect x="1.5" y="1.5" width="21" height="21" rx="4" fill="#f6f6f6" stroke="#555" stroke-width="2"/><rect x="6" y="10" width="8" height="8" fill="none" stroke="#555" stroke-width="2"/><path d="M10 10V6H18V14H14" fill="none" stroke="#555" stroke-width="2"/></svg>
<svg class="i" style="left:280.5px;top:135.5px;" width="12" height="12" viewBox="0 0 24 24"><rect x="1.5" y="1.5" width="21" height="21" rx="4" fill="#f6f6f6" stroke="#555" stroke-width="2"/><path d="M6.5 6.5L17.5 17.5M17.5 6.5L6.5 17.5" stroke="#444" stroke-width="3.6"/></svg>
<svg class="i" style="left:7.5px;top:158px;" width="16" height="16" viewBox="0 0 24 24"><rect x="2" y="2" width="17" height="17" fill="#fdfdfd" stroke="#666" stroke-width="1.5"/><circle cx="18.5" cy="19" r="4" fill="#5aa05a" stroke="#3d7d3d" stroke-width="0.8"/><circle cx="18.5" cy="19" r="1.6" fill="#cfe8cf"/></svg>
<svg class="i" style="left:33px;top:158px;" width="16" height="16" viewBox="0 0 24 24"><g fill="#4c8ad3" stroke="#2f66a8" stroke-width="0.6" stroke-linejoin="round"><path d="M2 11C2.5 5 9 1.5 14.5 4L16 1.5 20.5 9.5 11.5 9.5 13 7C9.5 5.5 6.3 8 6 11Z"/><path d="M22 13C21.5 19 15 22.5 9.500 20L8 22.500 3.500 14.500 12.500 14.500 11 17C14.500 18.500 17.700 16 18 13Z"/></g></svg>
<svg class="i" style="left:58px;top:158px;" width="16" height="16" viewBox="0 0 24 24"><path d="M2 3H22L14 12.5V22L10 19.5V12.500Z" fill="#6d9ad1" stroke="#38608f" stroke-width="1" stroke-linejoin="round"/><path d="M2 2.500H22V5H2Z" fill="#f5d53a" stroke="#b99714" stroke-width="0.8"/></svg>
<svg class="i" style="left:83.5px;top:158px;" width="16" height="16" viewBox="0 0 24 24"><path d="M4 3V21M4 8H8M4 14H8M4 20H8" stroke="#777" stroke-width="1.2" fill="none"/><g fill="#f7a428"><rect x="6" y="6.500" width="3.500" height="3.500"/><rect x="6" y="12.500" width="3.500" height="3.500"/><rect x="6" y="18" width="3.500" height="3.500"/></g><path d="M15.500 1L22.500 9H18V21.500H13V9H8.500Z" fill="#5b8bc6" stroke="#2f5b94" stroke-width="1" stroke-linejoin="round"/></svg>
<svg class="i" style="left:108px;top:158px;" width="16" height="16" viewBox="0 0 24 24"><circle cx="12" cy="12" r="10.500" fill="#5b8fd0" stroke="#9dbde6" stroke-width="1.5"/><text x="8.800" y="18.500" font-family="Liberation Serif,serif" font-style="italic" font-weight="bold" font-size="18" fill="#fff">i</text></svg>
<div class="b " style="left:0px;top:182px;width:294px;height:362px;background:#fff;border:1px solid #a3a3a3"></div>
<div class="b " style="left:1px;top:249px;width:215px;height:22px;background:#f0f0f0"></div>
<div class="b " style="left:277px;top:183px;width:16px;height:360px;background:#e2e2e2;border-left:1px solid #c4c4c4"></div>
<div class="b sbb" style="left:277px;top:183px;width:16px;height:16px;"></div>
<svg class="i" style="left:281px;top:188.5px" width="8" height="4" viewBox="0 0 8 4"><path d="M0 4H8L4 0Z" fill="#555"/></svg>
<div class="b sb" style="left:277px;top:199px;width:16px;height:248px;border-left:1px solid #c4c4c4"></div>
<div class="b sbb" style="left:277px;top:526px;width:16px;height:17px;"></div>
<svg class="i" style="left:281px;top:532.5px" width="8" height="4" viewBox="0 0 8 4"><path d="M0 0H8L4 4Z" fill="#555"/></svg>
<svg class="i" style="left:20px;top:184.5px;" width="20" height="20" viewBox="0 0 24 24"><path d="M12 1L15 9 23.500 9.500 17 15 19.200 23.200 12 18.500 4.800 23.200 7 15 0.500 9.500 9 9Z" fill="#fdfb7a" stroke="#dcaa00" stroke-width="1.6" stroke-linejoin="miter"/></svg>
<div class="t tr" style="left:46.5px;top:184.5px;"><span class="h" style="--n:1">お</span>気<span class="h" style="--n:1">に</span>入<span class="h" style="--n:1">り</span></div>
<svg class="i" style="left:4.5px;top:215px" width="8" height="4" viewBox="0 0 8 4"><path d="M0 0H8L4 4Z" fill="#555"/></svg>
<svg class="i" style="left:20px;top:206.5px;" width="20" height="20" viewBox="0 0 24 24"><path d="M3.500 2.500H20.500V19.500H7.500Q7.500 21.500 5.500 21.500Q3.500 21.500 3.500 19.500Z" fill="#ebebeb" stroke="#9a9a9a" stroke-width="1.1"/><path d="M6.200 3V17.500" stroke="#c4c4c4" stroke-width="1.800"/><path d="M12.500 2.500H16.500V9.500L14.500 11.500 12.500 9.500Z" fill="#6b97cd" stroke="#2f5587" stroke-width="0.9"/></svg>
<div class="t tr" style="left:46.5px;top:206.5px;">空間<span class="k" style="--n:6">ブックマーク</span></div>
<svg class="i" style="left:20.5px;top:237px" width="8" height="4" viewBox="0 0 8 4"><path d="M0 0H8L4 4Z" fill="#555"/></svg>
<svg class="i" style="left:36px;top:228.5px;" width="20" height="20" viewBox="0 0 24 24"><path d="M2.500 6Q2.500 4.500 4 4.500H10L12 7H20Q21.500 7 21.500 8.500V20.500H2.500Z" fill="#ececec" stroke="#9d9d9d" stroke-width="1.100" stroke-linejoin="round"/></svg>
<div class="t tr" style="left:62.5px;top:228.5px;"><span class="k" style="--n:13">プロジェクト・ブックマーク</span></div>
<svg class="i" style="left:52px;top:250.5px;" width="20" height="20" viewBox="0 0 24 24"><path d="M7 2.500H17V16.500L12 22 7 16.500Z" fill="#7aa3d6" stroke="#2f5587" stroke-width="1.2" stroke-linejoin="round"/><path d="M9.300 3.500V16" stroke="#b5cfee" stroke-width="2"/></svg>
<div class="t tr" style="left:78.5px;top:250.5px;">新規<span class="k" style="--n:6">ブックマーク</span></div>
<svg class="i" style="left:36px;top:272.5px;" width="20" height="20" viewBox="0 0 24 24"><path d="M2.500 6Q2.500 4.500 4 4.500H10L12 7H20Q21.500 7 21.500 8.500V20.500H2.500Z" fill="#ececec" stroke="#9d9d9d" stroke-width="1.100" stroke-linejoin="round"/></svg>
<div class="t tr" style="left:62.5px;top:272.5px;"><span class="k" style="--n:11">ユーザー・ブックマーク</span></div>
<svg class="i" style="left:6.5px;top:300px" width="5" height="9" viewBox="0 0 5 9"><path d="M0 0V9L5 4.5Z" fill="#555"/></svg>
<svg class="i" style="left:20px;top:294.5px;" width="20" height="20" viewBox="0 0 24 24"><path d="M2.500 6Q2.500 4.500 4 4.500H10L12 7H21.500V20.500H2.500Z" fill="#a6d23c" stroke="#7a9a2c" stroke-width="1.1"/><path d="M3 19.500L11 11 3 8ZM11 11L21 19.500V12Z" fill="#d9f08a" opacity=".8"/><path d="M11 9H19L15 15Z" fill="#1f8a2e"/></svg>
<div class="t tr" style="left:46.5px;top:294.5px;"><span class="k" style="--n:9">プロジェクトホーム</span></div>
<svg class="i" style="left:6.5px;top:322px" width="5" height="9" viewBox="0 0 5 9"><path d="M0 0V9L5 4.5Z" fill="#555"/></svg>
<svg class="i" style="left:20px;top:316.5px;" width="20" height="20" viewBox="0 0 24 24"><path d="M2.500 6Q2.500 4.500 4 4.500H10L12 7H21.500V20.500H2.500Z" fill="#ececec" stroke="#9d9d9d" stroke-width="1.1"/><path d="M6.500 14L12 9 17.500 14H15.500V18.500H8.500V14Z" fill="#fff" stroke="#333" stroke-width="1.3" stroke-linejoin="round"/></svg>
<div class="t tr" style="left:46.5px;top:316.5px;"><span class="k" style="--n:3">ホーム</span></div>
<svg class="i" style="left:6.5px;top:344px" width="5" height="9" viewBox="0 0 5 9"><path d="M0 0V9L5 4.5Z" fill="#555"/></svg>
<svg class="i" style="left:20px;top:338.5px;" width="20" height="20" viewBox="0 0 24 24"><path d="M2.500 6Q2.500 4.500 4 4.500H10L12 7H20Q21.500 7 21.500 8.500V20.500H2.500Z" fill="#ececec" stroke="#9d9d9d" stroke-width="1.100" stroke-linejoin="round"/></svg>
<div class="t tr" style="left:46.5px;top:338.5px;">C:¥ (OS)</div>
<svg class="i" style="left:20px;top:360.5px;" width="20" height="20" viewBox="0 0 24 24"><path d="M1.500 8.500L12 4.500 22.500 8.500 12 13.500Z" fill="#b8930c" stroke="#94800f" stroke-width="0.8" stroke-linejoin="round"/><circle cx="12" cy="7" r="6.800" fill="#9dbfe4" stroke="#5e86b8" stroke-width="0.7"/><path d="M7.500 3.800Q9.500 2.300 11 3.800T9.500 6.800 7 6ZM13.500 2.800Q16.500 3 17.500 6T15 8 13.500 5.500ZM9.500 8.800Q12 8 13 10.500T10.500 12.500Z" fill="#2f5b94"/><path d="M1.500 8.500L12 13.500V23L1.500 17.500Z" fill="#e3b505" stroke="#94800f" stroke-width="0.8" stroke-linejoin="round"/><path d="M22.500 8.500L12 13.500V23L22.500 17.500Z" fill="#fbef60" stroke="#94800f" stroke-width="0.8" stroke-linejoin="round"/></svg>
<div class="t tr" style="left:46.5px;top:360.5px;">GeoPackage</div>
<svg class="i" style="left:20px;top:382.5px;" width="20" height="20" viewBox="0 0 24 24"><path d="M1.500 23C5 13 11 5 22.500 1C22 9.500 15.500 16 6 18Z" fill="#7ba3d4" stroke="#345c8c" stroke-width="0.9" stroke-linejoin="round"/><path d="M2 22.500C7 14 12 8 20.500 3" stroke="#d8e6f5" stroke-width="1" fill="none"/></svg>
<div class="t tr" style="left:46.5px;top:382.5px;">SpatiaLite</div>
<svg class="i" style="left:20px;top:404.5px;" width="20" height="20" viewBox="0 0 24 24"><path d="M4.500 2.500Q0.500 3.500 1.500 9.500Q2.500 14.500 6 15.500Q7.500 15.500 8 13L9 20.500Q10 23 13 22Q14.500 21 14 18L14.500 14.500Q17 15.500 19 14.500L22.500 13.500Q20 13.500 20.500 11.500Q23 8 21.500 4.500Q19.500 1.500 15 2.500Q10 1 4.500 2.500Z" fill="#6a94c6" stroke="#3b6393" stroke-width="1" stroke-linejoin="round"/><path d="M8.500 4.500Q7 9 8.500 13.500M14.500 5Q17 9 14.500 14.500M11 6Q10.500 9 11.500 11.500" stroke="#3b6393" stroke-width="0.9" fill="none"/></svg>
<div class="t tr" style="left:46.5px;top:404.5px;">PostgreSQL</div>
<svg class="i" style="left:20px;top:426.5px;" width="20" height="20" viewBox="0 0 24 24"><rect x="2" y="2" width="20" height="20" fill="none" stroke="#3f6fae" stroke-width="1.600" stroke-dasharray="2 1.800"/><rect x="5.500" y="5.500" width="13" height="13" fill="#6d94c4"/></svg>
<div class="t tr" style="left:46.5px;top:426.5px;">SAP HANA</div>
<svg class="i" style="left:20px;top:448.5px;" width="20" height="20" viewBox="0 0 24 24"><path d="M2 2.500C12 1.500 20 5 22.500 11L2.500 21.500Q8 12 2 2.500Z" fill="#6d94c4" stroke="#2f4f7a" stroke-width="1.100" stroke-linejoin="round"/><path d="M7.500 3Q13 10 8.500 18M12.500 4Q17 10 14 15" stroke="#2f4f7a" stroke-width="0.9" fill="none"/></svg>
<div class="t tr" style="left:46.5px;top:448.5px;">MS SQL Server</div>
<svg class="i" style="left:20px;top:470.5px;" width="20" height="20" viewBox="0 0 24 24"><rect x="1.500" y="5" width="21" height="14" rx="6" fill="#6d94c4" stroke="#2f4f7a" stroke-width="1.400"/></svg>
<div class="t tr" style="left:46.5px;top:470.5px;">Oracle</div>
<svg class="i" style="left:20px;top:492.5px;" width="20" height="20" viewBox="0 0 24 24"><circle cx="12" cy="12" r="10.500" fill="#a9c5e6" stroke="#5e86b8" stroke-width="1"/><path d="M5 8Q8 4 11 6T13 10 9 12 7 16 4.500 13ZM14 5Q18 4 20 8T19 14 16 17 15 12 13.500 8ZM10 16Q12 15 13 17.500T11 21Z" fill="#3f6799" opacity=".9"/></svg>
<div class="t tr" style="left:46.5px;top:492.5px;">WMS/WMTS</div>
<svg class="i" style="left:20px;top:514.5px;" width="20" height="20" viewBox="0 0 24 24"><g fill="#6d94c4" stroke="#333" stroke-width="1.200"><rect x="2.500" y="2.500" width="19" height="19"/><path d="M9 2.500V21.500M15.300 2.500V21.500M2.500 9H21.500M2.500 15.300H21.500" fill="none"/></g></svg>
<div class="t tr" style="left:46.5px;top:514.5px;">Vector Tiles</div>
<div class="b" style="left:0;top:536px;width:277px;height:7px;overflow:hidden"><svg class="i" style="left:21px;top:1px" width="18" height="18" viewBox="0 0 18 18"><g fill="#6d94c4"><rect x="0" y="0" width="5" height="5"/><rect x="6.5" y="0" width="5" height="5"/><rect x="13" y="0" width="5" height="5"/></g></svg><div class="t tr" style="left:46.5px;top:0px">XYZ Tiles</div></div>
<div class="hd" style="left:140px;top:546px;width:17px;height:2px;background-size:3px 2px"></div>
<div class="t dk" style="left:4.5px;top:551.5px;"><span class="k" style="--n:3">レイヤ</span></div>
<svg class="i" style="left:266.5px;top:554.5px;" width="12" height="12" viewBox="0 0 24 24"><rect x="1.5" y="1.5" width="21" height="21" rx="4" fill="#f6f6f6" stroke="#555" stroke-width="2"/><rect x="6" y="10" width="8" height="8" fill="none" stroke="#555" stroke-width="2"/><path d="M10 10V6H18V14H14" fill="none" stroke="#555" stroke-width="2"/></svg>
<svg class="i" style="left:280.5px;top:554.5px;" width="12" height="12" viewBox="0 0 24 24"><rect x="1.5" y="1.5" width="21" height="21" rx="4" fill="#f6f6f6" stroke="#555" stroke-width="2"/><path d="M6.5 6.5L17.5 17.5M17.5 6.5L6.5 17.5" stroke="#444" stroke-width="3.6"/></svg>
<svg class="i" style="left:8px;top:577px;" width="16" height="16" viewBox="0 0 24 24"><path d="M3 9L11 4 15 10 7 15Z" fill="#e9c51f" stroke="#a88a10" stroke-width="0.7"/><path d="M3 9L7 15 6 19 1 12Z" fill="#d9534a"/><path d="M7 15L15 10 14.500 13 6 19Z" fill="#4d82c0"/><path d="M13 12L22 3" stroke="#c98a3c" stroke-width="2.600" stroke-linecap="round"/><path d="M8 19Q10 13 14 11L16 13Q14 17 8 19Z" fill="#f1d9a5" stroke="#a97c3a" stroke-width="0.7"/></svg>
<svg class="i" style="left:33px;top:577px;" width="16" height="16" viewBox="0 0 24 24"><path d="M3.500 8.500H14.500V21H3.500Z" fill="#f4f4f4" stroke="#777" stroke-width="1.1"/><path d="M8.500 4.500H18.500V16" fill="none" stroke="#777" stroke-width="1.1"/><path d="M11 1.500V13M8 5V13" stroke="#6d94c4" stroke-width="1.800"/><circle cx="18.500" cy="19" r="4.200" fill="#5aa05a" stroke="#3d7d3d" stroke-width="0.7"/><path d="M18.500 16.600V21.400M16.100 19H20.900" stroke="#fff" stroke-width="1.400"/></svg>
<svg class="i" style="left:59px;top:577px;" width="16" height="16" viewBox="0 0 24 24"><path d="M1 11Q10 1 19 11Q10 19 1 11Z" fill="#f4f4f4" stroke="#999" stroke-width="1.100"/><circle cx="10" cy="10.500" r="4.200" fill="#5b87bb"/><circle cx="10" cy="10.500" r="1.800" fill="#223"/><path d="M14 16H23L18.500 21.500Z" fill="#555"/></svg>
<svg class="i" style="left:84px;top:577px;" width="16" height="16" viewBox="0 0 24 24"><path d="M1 3H19L12.500 11V21L8 18.500V11Z" fill="#6d9ad1" stroke="#38608f" stroke-width="1" stroke-linejoin="round"/><path d="M1 2.500H19V5H1Z" fill="#f5d53a" stroke="#b99714" stroke-width="0.8"/><path d="M13.500 16.500H23.500L18.500 22.500Z" fill="#555"/></svg>
<svg class="i" style="left:108.5px;top:577px;" width="16" height="16" viewBox="0 0 24 24"><text x="-1" y="14.500" font-family="Liberation Serif,serif" font-size="25" fill="#6b2d7d">ε</text><path d="M11.500 13.500H23L19.500 17.500V23H15V17.500Z" fill="#cdcdcd" stroke="#a4a4a4" stroke-width="0.9"/></svg>
<svg class="i" style="left:148.5px;top:577px;" width="16" height="16" viewBox="0 0 24 24"><path d="M4 3V21M4 8H8M4 14H8M4 20H8" stroke="#777" stroke-width="1.2" fill="none"/><g fill="#f7a428"><rect x="6" y="6.500" width="3.500" height="3.500"/><rect x="6" y="12.500" width="3.500" height="3.500"/><rect x="6" y="18" width="3.500" height="3.500"/></g><path d="M15.500 23L22.500 15H18V2.500H13V15H8.500Z" fill="#5b8bc6" stroke="#2f5b94" stroke-width="1" stroke-linejoin="round"/></svg>
<svg class="i" style="left:173px;top:577px;" width="16" height="16" viewBox="0 0 24 24"><path d="M4 3V21M4 8H8M4 14H8M4 20H8" stroke="#777" stroke-width="1.2" fill="none"/><g fill="#f7a428"><rect x="6" y="6.500" width="3.500" height="3.500"/><rect x="6" y="12.500" width="3.500" height="3.500"/><rect x="6" y="18" width="3.500" height="3.500"/></g><path d="M15.500 1L22.500 9H18V21.500H13V9H8.500Z" fill="#5b8bc6" stroke="#2f5b94" stroke-width="1" stroke-linejoin="round"/></svg>
<svg class="i" style="left:198px;top:577px;" width="16" height="16" viewBox="0 0 24 24"><rect x="2" y="2" width="17" height="17" fill="#fdfdfd" stroke="#666" stroke-width="1.500"/><rect x="13.500" y="15.500" width="9.500" height="6" rx="1.500" fill="#e8323c"/><path d="M15.500 18.500H21" stroke="#fff" stroke-width="1.500"/></svg>
<svg class="i" style="left:131px;top:583.25px" width="9" height="4.5" viewBox="0 0 9 4.5"><path d="M0 0H9L4.5 4.5Z" fill="#555"/></svg>
<div class="b " style="left:0px;top:601px;width:294px;height:386px;background:#fff;border:1px solid #a3a3a3"></div>
<div class="b " style="left:1px;top:712.5px;width:292px;height:22px;background:#f0f0f0"></div>
<div class="b ck" style="left:29px;top:605px;width:17px;height:17px;border-color:#bdbdbd"></div>
<svg class="i" style="left:31px;top:607px" width="13" height="13" viewBox="0 0 13 13"><path d="M1.5 6.5L5 10.5L11.5 1.5" fill="none" stroke="#000" stroke-width="2"/></svg>
<div class="b " style="left:52px;top:604px;width:18px;height:18px;background:#27f53b;border:1px solid rgba(20,20,20,.68)"></div>
<div class="t lb" style="left:77px;top:604.5px;">polygon</div>
<div class="b ck" style="left:29px;top:627px;width:17px;height:17px;border-color:#c6c6c6"></div>
<div class="b " style="left:52px;top:634px;width:18px;height:2px;background:#080808"></div>
<div class="t li" style="left:77px;top:626.5px;letter-spacing:0.3px">line</div>
<div class="b ck" style="left:29px;top:649px;width:17px;height:17px;border-color:#c6c6c6"></div>
<div class="b " style="left:52px;top:648px;width:18px;height:18px;background:#b54a4e;border:1px solid rgba(20,20,20,.68)"></div>
<div class="t li" style="left:77px;top:647.5px;">出力<span class="k" style="--n:3">レイヤ</span></div>
<div class="b " style="left:267px;top:648px;width:19px;height:19px;background:#f2f2f2;border:1px solid #e4e4e4;border-radius:4px"></div>
<svg class="i" style="left:269.5px;top:650.5px;" width="14" height="14" viewBox="0 0 24 24"><rect x="3" y="6.500" width="18" height="11" rx="2" fill="none" stroke="#8c8c8c" stroke-width="2.2"/><path d="M7 3V6M12 3V6M17 3V6M7 18V21M12 18V21M17 18V21" stroke="#8c8c8c" stroke-width="2"/></svg>
<div class="b ck" style="left:29px;top:671px;width:17px;height:17px;border-color:#c6c6c6"></div>
<div class="b " style="left:52px;top:670px;width:18px;height:18px;background:#e7718f;border:1px solid rgba(20,20,20,.68)"></div>
<div class="t li" style="left:77px;top:669.5px;">出力<span class="k" style="--n:3">レイヤ</span></div>
<div class="b " style="left:267px;top:670px;width:19px;height:19px;background:#f2f2f2;border:1px solid #e4e4e4;border-radius:4px"></div>
<svg class="i" style="left:269.5px;top:672.5px;" width="14" height="14" viewBox="0 0 24 24"><rect x="3" y="6.500" width="18" height="11" rx="2" fill="none" stroke="#8c8c8c" stroke-width="2.2"/><path d="M7 3V6M12 3V6M17 3V6M7 18V21M12 18V21M17 18V21" stroke="#8c8c8c" stroke-width="2"/></svg>
<div class="b ck" style="left:29px;top:693px;width:17px;height:17px;border-color:#c6c6c6"></div>
<div class="b " style="left:52px;top:692px;width:18px;height:18px;background:#14a3ad;border:1px solid rgba(20,20,20,.68)"></div>
<div class="t li" style="left:77px;top:691.5px;">出力<span class="k" style="--n:3">レイヤ</span></div>
<div class="b " style="left:267px;top:692px;width:19px;height:19px;background:#f2f2f2;border:1px solid #e4e4e4;border-radius:4px"></div>
<svg class="i" style="left:269.5px;top:694.5px;" width="14" height="14" viewBox="0 0 24 24"><rect x="3" y="6.500" width="18" height="11" rx="2" fill="none" stroke="#8c8c8c" stroke-width="2.2"/><path d="M7 3V6M12 3V6M17 3V6M7 18V21M12 18V21M17 18V21" stroke="#8c8c8c" stroke-width="2"/></svg>
<div class="b ck" style="left:29px;top:715px;width:17px;height:17px;border-color:#bdbdbd"></div>
<svg class="i" style="left:31px;top:717px" width="13" height="13" viewBox="0 0 13 13"><path d="M1.5 6.5L5 10.5L11.5 1.5" fill="none" stroke="#000" stroke-width="2"/></svg>
<div class="b " style="left:52px;top:714px;width:18px;height:18px;background:#987db7;border:1px solid rgba(20,20,20,.68)"></div>
<div class="t lbu" style="left:77px;top:713.5px;">出力<span class="k" style="--n:3">レイヤ</span></div>
<div class="b " style="left:267px;top:714px;width:19px;height:19px;background:#f2f2f2;border:1px solid #e4e4e4;border-radius:4px"></div>
<svg class="i" style="left:269.5px;top:716.5px;" width="14" height="14" viewBox="0 0 24 24"><rect x="3" y="6.500" width="18" height="11" rx="2" fill="none" stroke="#8c8c8c" stroke-width="2.2"/><path d="M7 3V6M12 3V6M17 3V6M7 18V21M12 18V21M17 18V21" stroke="#8c8c8c" stroke-width="2"/></svg>
<div class="b ck" style="left:29px;top:737px;width:17px;height:17px;border-color:#c6c6c6"></div>
<div class="b " style="left:52.5px;top:735.5px;width:19px;height:19px;background:#d4af37;border:1px solid #9a8440;border-radius:50%"></div>
<div class="t li" style="left:77px;top:736.5px;letter-spacing:1.3px">point</div>
<div class="hd" style="left:297.5px;top:553px;width:2px;height:17px;background-size:2px 3px"></div>
<div class="b " style="left:301px;top:132px;width:1621px;height:855px;background:#fff;border:1px solid #a3a3a3"></div>
<svg class="i" style="left:0;top:0" width="1920" height="1020" viewBox="0 0 1920 1020">
<g stroke-linejoin="round" stroke-linecap="round">
<g fill="#232323" stroke="#232323" stroke-width="67">
<polygon points="468.9,794.6 676.8,766.2 643,869.5 483.4,873.2"/><polygon points="1127.9,766.9 1133.3,763.4 1148.0,764.4 1165.2,768.3 1179.9,771.8 1202.0,774.2 1214.2,773.7 1225.2,771.3 1230.1,770.0 1236.3,774.2 1246.1,784.8 1258.3,799.5 1270.6,815.4 1280.4,832.5 1289.0,848.5 1295.1,859.5 1298.0,866.9 1298.0,876.2 1197.1,909.0 1186.0,909.0 1177.5,906.1 1173.8,902.4 1172.1,895.0 1170.1,887.7 1157.8,883.5 1144.4,879.1 1138.2,873.0 1134.6,864.4 1132.1,858.3 1131.4,849.7 1127.9,844.3 1119.9,836.2 1113.2,829.6 1111.3,820.3 1108.3,810.5 1107.6,797.0 1110.0,788.4 1116.2,782.3 1122.3,776.2"/><path d="M920.5 672.4A48.3 48.3 0 1 1 861.9 672.4Z"/>
</g>
<g fill="#987db7" stroke="#987db7" stroke-width="64.8">
<polygon points="468.9,794.6 676.8,766.2 643,869.5 483.4,873.2"/><polygon points="1127.9,766.9 1133.3,763.4 1148.0,764.4 1165.2,768.3 1179.9,771.8 1202.0,774.2 1214.2,773.7 1225.2,771.3 1230.1,770.0 1236.3,774.2 1246.1,784.8 1258.3,799.5 1270.6,815.4 1280.4,832.5 1289.0,848.5 1295.1,859.5 1298.0,866.9 1298.0,876.2 1197.1,909.0 1186.0,909.0 1177.5,906.1 1173.8,902.4 1172.1,895.0 1170.1,887.7 1157.8,883.5 1144.4,879.1 1138.2,873.0 1134.6,864.4 1132.1,858.3 1131.4,849.7 1127.9,844.3 1119.9,836.2 1113.2,829.6 1111.3,820.3 1108.3,810.5 1107.6,797.0 1110.0,788.4 1116.2,782.3 1122.3,776.2"/><path d="M920.5 672.4A48.3 48.3 0 1 1 861.9 672.4Z"/>
</g>
</g>
<circle cx="415.5" cy="396.3" r="74.6" fill="#987db7" stroke="#232323" stroke-width="1.1"/>
<g fill="#27f53b" stroke="#232323" stroke-width="1.1" stroke-linejoin="round">
<circle cx="415.6" cy="396.4" r="42.2"/><polygon points="468.9,794.6 676.8,766.2 643,869.5 483.4,873.2"/><polygon points="1127.9,766.9 1133.3,763.4 1148.0,764.4 1165.2,768.3 1179.9,771.8 1202.0,774.2 1214.2,773.7 1225.2,771.3 1230.1,770.0 1236.3,774.2 1246.1,784.8 1258.3,799.5 1270.6,815.4 1280.4,832.5 1289.0,848.5 1295.1,859.5 1298.0,866.9 1298.0,876.2 1197.1,909.0 1186.0,909.0 1177.5,906.1 1173.8,902.4 1172.1,895.0 1170.1,887.7 1157.8,883.5 1144.4,879.1 1138.2,873.0 1134.6,864.4 1132.1,858.3 1131.4,849.7 1127.9,844.3 1119.9,836.2 1113.2,829.6 1111.3,820.3 1108.3,810.5 1107.6,797.0 1110.0,788.4 1116.2,782.3 1122.3,776.2"/><path d="M920.5 672.4A48.3 48.3 0 1 1 861.9 672.4Z"/>
</g></svg>
<div class="b " style="left:0px;top:987.5px;width:1920px;height:32.5px;background:#f0f0f0"></div>
<div class="b inp" style="left:4px;top:992px;width:200px;height:25px;border-color:#bdbdbd"></div>
<svg class="i" style="left:13.5px;top:996px;" width="16" height="16" viewBox="0 0 24 24"><circle cx="9.500" cy="9.500" r="7" fill="none" stroke="#8a8a8a" stroke-width="2"/><path d="M14.500 14.500L22 22" stroke="#8a8a8a" stroke-width="2.800" stroke-linecap="round"/></svg>
<div class="t gray" style="left:39px;top:995px;letter-spacing:0.7px">検索(Ctrl + K)</div>
<div class="t st" style="left:1114px;top:995px;">座標</div>
<div class="b inp" style="left:1143.5px;top:991.5px;width:101px;height:25px;"></div>
<div class="t st" style="left:1150px;top:995px;">-146557,43742</div>
<svg class="i" style="left:1248.5px;top:994px;" width="20" height="20" viewBox="0 0 24 24"><ellipse cx="11" cy="13" rx="6.500" ry="9" fill="#f4f4f4" stroke="#1a1a1a" stroke-width="2.200" transform="rotate(-25 11 13)"/><path d="M4 8.500L13.500 12M8.500 5.500L10.500 11" stroke="#1a1a1a" stroke-width="1.800" fill="none"/><path d="M9 13Q10 18 14 20" stroke="#1a1a1a" stroke-width="1.500" fill="none"/><path d="M14 4Q18 2 21 1M17.500 5.500L20.500 4.500M15 1.500L16.500 0.500" stroke="#333" stroke-width="1" fill="none" stroke-dasharray="1.500 1.200"/><circle cx="17" cy="18" r="2.500" fill="#e8d2d2" opacity=".8"/></svg>
<div class="t st" style="left:1282px;top:995px;">縮尺</div>
<div class="b inp" style="left:1311px;top:991.5px;width:98px;height:25px;"></div>
<div class="t st" style="left:1315px;top:995px;">1:146745</div>
<div class="b " style="left:1383px;top:992.5px;width:25px;height:23px;background:linear-gradient(#fafafa,#ececec);border-radius:0 2px 2px 0"></div>
<svg class="i" style="left:1390.5px;top:1002.25px" width="9" height="4.5" viewBox="0 0 9 4.5"><path d="M0 0H9L4.5 4.5Z" fill="#555"/></svg>
<svg class="i" style="left:1421px;top:995px;" width="18" height="18" viewBox="0 0 24 24"><path d="M7 11V7.500A5 5 0 0 1 17 7.500V11" fill="none" stroke="#9a9a9a" stroke-width="2.600"/><rect x="3.500" y="10.500" width="17" height="12" rx="1.500" fill="#8a8a8a"/></svg>
<div class="t st" style="left:1446.5px;top:995px;">拡大</div>
<div class="b inp" style="left:1476.5px;top:991.5px;width:96px;height:25px;"></div>
<div class="t st" style="left:1481px;top:995px;">100%</div>
<div class="b " style="left:1555.5px;top:992.5px;width:16px;height:23px;background:linear-gradient(#fbfbfb,#f0f0f0);border-left:1px solid #c8c8c8;border-radius:0 2px 2px 0"></div>
<svg class="i" style="left:1558.75px;top:996.5px" width="9.5" height="5" viewBox="0 0 9.5 5"><path d="M0 5H9.5L4.75 0Z" fill="#555"/></svg>
<svg class="i" style="left:1558.75px;top:1007px" width="9.5" height="5" viewBox="0 0 9.5 5"><path d="M0 0H9.5L4.75 5Z" fill="#555"/></svg>
<div class="t st" style="left:1581px;top:995px;">回転</div>
<div class="b inp" style="left:1617.5px;top:991.5px;width:92px;height:25px;"></div>
<div class="t st" style="left:1621px;top:995px;">0.0 °</div>
<div class="b " style="left:1692.5px;top:992.5px;width:16px;height:23px;background:linear-gradient(#fbfbfb,#f0f0f0);border-left:1px solid #c8c8c8;border-radius:0 2px 2px 0"></div>
<svg class="i" style="left:1695.75px;top:996.5px" width="9.5" height="5" viewBox="0 0 9.5 5"><path d="M0 5H9.5L4.75 0Z" fill="#555"/></svg>
<svg class="i" style="left:1695.75px;top:1007px" width="9.5" height="5" viewBox="0 0 9.5 5"><path d="M0 0H9.5L4.75 5Z" fill="#555"/></svg>
<div class="b ck" style="left:1716.5px;top:996px;width:16px;height:16px;border-color:#bdbdbd"></div>
<svg class="i" style="left:1718.5px;top:998px" width="12" height="12" viewBox="0 0 13 13"><path d="M1.5 6.5L5 10.5L11.5 1.5" fill="none" stroke="#000" stroke-width="2"/></svg>
<div class="t st" style="left:1739.5px;top:995px;"><span class="k" style="--n:3">レンダ</span></div>
<svg class="i" style="left:1783.5px;top:995px;" width="18" height="18" viewBox="0 0 24 24"><ellipse cx="12" cy="12" rx="10.500" ry="8.500" fill="#f4f4f4" stroke="#666" stroke-width="1.300"/><path d="M1.500 12H22.500M12 3.500V20.500M3.500 7.500H20.500M3.500 16.500H20.500" stroke="#666" stroke-width="1"/><ellipse cx="12" cy="12" rx="5" ry="8.500" fill="none" stroke="#666" stroke-width="1"/></svg>
<div class="t st" style="left:1804px;top:995px;">EPSG:6680</div>
<svg class="i" style="left:1891.5px;top:993px;" width="22" height="22" viewBox="0 0 24 24"><path d="M3 10Q3 3.500 12 3.500T21 10 12 16.500Q10 16.500 8.500 16L4 20 5.500 14.500Q3 12.500 3 10Z" fill="#737373" stroke="#6a6a6a" stroke-width="1.2" stroke-linejoin="round"/></svg>
<div class="b " style="left:1054px;top:22px;width:806px;height:508px;background:#f0f0f0;border:1px solid #b4b4b4;border-radius:8px;box-shadow:0 30px 60px rgba(0,0,0,.36),0 3px 22px rgba(0,0,0,.24)"></div>
<div class="b " style="left:1055px;top:23px;width:804px;height:37px;background:#edf2f9;border-radius:7px 7px 0 0"></div>
<svg class="i" style="left:1062.2px;top:29.3px;" width="24" height="24" viewBox="0 0 24 24"><circle cx="11.800" cy="11.700" r="7.400" fill="none" stroke="#8db11f" stroke-width="3.800"/><path d="M4.400 11.700A7.400 7.400 0 0 0 19.200 11.700" fill="none" stroke="#78a824" stroke-width="3.800"/><path d="M6.600 16.900A7.400 7.400 0 0 0 17 16.900" fill="none" stroke="#62a02a" stroke-width="3.800"/><path d="M14.500 13.200L21.600 20.200" stroke="#f3f4f5" stroke-width="5.800"/><path d="M14 13.900L20.300 20.100" stroke="#5c9e2a" stroke-width="4.200"/><path d="M9.900 9.900L14 10.300 15.300 12.300 12.300 15.300 10.300 14Z" fill="#f07f13" stroke="#f07f13" stroke-width="0.800" stroke-linejoin="round"/><path d="M15.400 12.700L12.700 15.400" stroke="#d9d62e" stroke-width="1.400"/></svg>
<div class="t dt" style="left:1090.5px;top:31px;"><span class="k" style="--n:4">バッファ</span><span class="p" style="--n:1">（</span>buffer<span class="p" style="--n:1">）</span></div>
<svg class="i" style="left:1832px;top:35px" width="12" height="12" viewBox="0 0 12 12"><path d="M0.5 0.5L11.5 11.5M11.5 0.5L0.5 11.5" stroke="#111" stroke-width="1.3" fill="none"/></svg>
<div class="b " style="left:1068px;top:101px;width:646px;height:330px;background:#fff;border:1px solid #ababab"></div>
<div class="b " style="left:1152px;top:76px;width:53px;height:26px;background:#e9e9e9;border:1px solid #c6c6c6;border-bottom:0;border-radius:3px 3px 0 0"></div>
<div class="b " style="left:1068px;top:74px;width:85px;height:29px;background:#fff;border:1px solid #ababab;border-bottom:0;border-radius:3px 3px 0 0"></div>
<div class="t dl" style="left:1083.5px;top:78.5px;"><span class="k" style="--n:5">パラメータ</span></div>
<div class="t dl" style="left:1167.5px;top:78.5px;"><span class="k" style="--n:2">ログ</span></div>
<div class="b " style="left:1069px;top:110px;width:626px;height:320px;background:#f0f0f0"></div>
<div class="b " style="left:1695px;top:110px;width:18px;height:320px;background:#e2e2e2;border-left:1px solid #c4c4c4"></div>
<div class="b sbb" style="left:1695px;top:110px;width:18px;height:17px;"></div>
<svg class="i" style="left:1699.5px;top:115.75px" width="9" height="4.5" viewBox="0 0 9 4.5"><path d="M0 4.5H9L4.5 0Z" fill="#555"/></svg>
<div class="b sb" style="left:1695px;top:126px;width:18px;height:200px;"></div>
<div class="b sbb" style="left:1695px;top:413px;width:18px;height:17px;"></div>
<svg class="i" style="left:1699.5px;top:419.75px" width="9" height="4.5" viewBox="0 0 9 4.5"><path d="M0 0H9L4.5 4.5Z" fill="#555"/></svg>
<div class="t dl" style="left:1075.5px;top:111.5px;letter-spacing:.4px">入力<span class="k" style="--n:3">レイヤ</span></div>
<div class="b cmb" style="left:1074px;top:136px;width:506px;height:28px;"></div>
<svg class="i" style="left:1079px;top:138.5px;" width="22" height="22" viewBox="0 0 24 24"><path d="M3 8Q3 4.500 7 5.500T12 7 17 5.500 21 8V16Q21 19.500 17 18.500T12 17 7 18.500 3 16Z" fill="#d6d6d6" stroke="#9e9e9e" stroke-width="1.200"/><path d="M4.500 8.500Q5 6.500 8 7.500T12 8.500" stroke="#f0f0f0" stroke-width="1.200" fill="none"/></svg>
<div class="t dl" style="left:1103.5px;top:140.5px;">polygon [EPSG:6680]</div>
<svg class="i" style="left:1560.5px;top:148.25px" width="9" height="4.5" viewBox="0 0 9 4.5"><path d="M0 0H9L4.5 4.5Z" fill="#555"/></svg>
<svg class="i" style="left:1589px;top:136.5px;" width="24" height="24" viewBox="0 0 24 24"><g fill="none" stroke-linejoin="round"><g stroke="#5a9e5d" stroke-width="4.3"><path d="M7.900 6.450H5.700Q2.700 6.450 2.700 9.450V14.700Q2.700 17.700 5.700 17.700H10.500"/><path d="M16 17.700H18.500Q21.500 17.700 21.500 14.700V9.450Q21.500 6.450 18.500 6.450H14"/></g><g fill="#8fca90" stroke="#5a9e5d" stroke-width="0.9"><path d="M9.900 13.700L14.600 17.650 9.900 21.500Z"/><path d="M14.600 2.400L9.300 6.400 14.600 10.300Z"/></g><g stroke="#8fca90" stroke-width="2.500"><path d="M7.450 6.450H5.700Q2.700 6.450 2.700 9.450V14.700Q2.700 17.700 5.700 17.700H10.500"/><path d="M16.450 17.700H18.500Q21.500 17.700 21.500 14.700V9.450Q21.500 6.450 18.500 6.450H14"/></g></g></svg>
<svg class="i" style="left:1625px;top:137px;" width="24" height="24" viewBox="0 0 24 24"><path d="M11.6 10.8L20.6 20.2" stroke="#6b5f2a" stroke-width="5.2" stroke-linecap="round"/><path d="M11.6 10.8L20.6 20.2" stroke="#f0dc82" stroke-width="3.4" stroke-linecap="round"/><path d="M10 9.2L12 11.2" stroke="#333" stroke-width="5.2"/><circle cx="20.3" cy="19.9" r="0.9" fill="#d9d9d9" stroke="#777" stroke-width="0.5"/><path d="M3.1 1.4A5.2 5.2 0 0 1 11.3 8L10 9.9A5.2 5.2 0 0 1 0.6 6.8L4.2 6.6A2.1 2.1 0 1 0 5.2 3.3Z" fill="#ececec" stroke="#6e6e6e" stroke-width="1" stroke-linejoin="round"/></svg>
<div class="b btn" style="left:1658px;top:136px;width:33px;height:22px;"></div>
<div class="t dl" style="left:1668.5px;top:133.5px;font-weight:bold;letter-spacing:-0.4px">...</div>
<svg class="i" style="left:1680.25px;top:149.25px" width="8.5" height="4.5" viewBox="0 0 8.5 4.5"><path d="M0 0H8.5L4.25 4.5Z" fill="#555"/></svg>
<div class="b " style="left:1074px;top:172px;width:17px;height:17px;background:#f7f7f7;border:1px solid #cfcfcf"></div>
<div class="t dl dis" style="left:1098px;top:170.5px;">選択<span class="h" style="--n:2">した</span> 地物<span class="h" style="--n:2">のみ</span></div>
<div class="t dl" style="left:1074.5px;top:195.5px;">距離</div>
<div class="b inp" style="left:1074px;top:221px;width:469px;height:24px;"></div>
<div class="t dl" style="left:1078.5px;top:223.5px;">1000.000000</div>
<svg class="i" style="left:1494px;top:222.5px;" width="21" height="21" viewBox="0 0 24 24"><path d="M1 12L6 5.500H22V18.500H6Z" fill="#9a9a9a"/><path d="M10 8.500L17.500 15.500M17.500 8.500L10 15.500" stroke="#fff" stroke-width="1.800"/></svg>
<div class="b " style="left:1525px;top:222px;width:17px;height:22px;background:linear-gradient(#fbfbfb,#f0f0f0);border-left:1px solid #c8c8c8;border-radius:0 2px 2px 0"></div>
<svg class="i" style="left:1529.25px;top:226px" width="9.5" height="5" viewBox="0 0 9.5 5"><path d="M0 5H9.5L4.75 0Z" fill="#555"/></svg>
<svg class="i" style="left:1529.25px;top:235.3px" width="9.5" height="5" viewBox="0 0 9.5 5"><path d="M0 0H9.5L4.75 5Z" fill="#555"/></svg>
<div class="b cmb" style="left:1554px;top:221px;width:100px;height:23px;"></div>
<div class="t dl" style="left:1559.5px;top:223px;--ks:.8"><span class="k" style="--n:4">メートル</span></div>
<svg class="i" style="left:1635px;top:230.25px" width="9" height="4.5" viewBox="0 0 9 4.5"><path d="M0 0H9L4.5 4.5Z" fill="#555"/></svg>
<svg class="i" style="left:1664px;top:221px;" width="24" height="24" viewBox="0 0 24 24"><path d="M1.500 11L6 4.500H18V17.500H6Z" fill="#f4f4f4" stroke="#6a6a6a" stroke-width="1.500" stroke-linejoin="round"/><path d="M8 8.500H15" stroke="#555" stroke-width="2.200"/><path d="M8 13.500H18" stroke="#bbb" stroke-width="1"/><path d="M15.500 16H23.500L19.500 20.500Z" fill="#444"/></svg>
<div class="t dl" style="left:1074px;top:250.5px;"><span class="k" style="--n:5">セグメント</span></div>
<div class="b inp" style="left:1074px;top:276px;width:617px;height:22px;"></div>
<div class="t dl" style="left:1078.5px;top:277.5px;">100</div>
<svg class="i" style="left:1642px;top:276.5px;" width="21" height="21" viewBox="0 0 24 24"><path d="M1 12L6 5.500H22V18.500H6Z" fill="#9a9a9a"/><path d="M10 8.500L17.500 15.500M17.500 8.500L10 15.500" stroke="#fff" stroke-width="1.800"/></svg>
<div class="b " style="left:1673px;top:277px;width:17px;height:20px;background:linear-gradient(#fbfbfb,#f0f0f0);border-left:1px solid #c8c8c8;border-radius:0 2px 2px 0"></div>
<svg class="i" style="left:1677.25px;top:280.5px" width="9.5" height="5" viewBox="0 0 9.5 5"><path d="M0 5H9.5L4.75 0Z" fill="#555"/></svg>
<svg class="i" style="left:1677.25px;top:289.2px" width="9.5" height="5" viewBox="0 0 9.5 5"><path d="M0 0H9.5L4.75 5Z" fill="#555"/></svg>
<div class="t dl" style="left:1074.5px;top:303.5px;">線端<span class="k" style="--n:4">スタイル</span></div>
<div class="b cmb" style="left:1074px;top:328px;width:617px;height:23px;"></div>
<div class="t dl" style="left:1079.5px;top:330px;">Round</div>
<svg class="i" style="left:1672px;top:337.25px" width="9" height="4.5" viewBox="0 0 9 4.5"><path d="M0 0H9L4.5 4.5Z" fill="#555"/></svg>
<div class="t dl" style="left:1074.5px;top:355.5px;">継<span class="h" style="--n:1">ぎ</span>目<span class="k" style="--n:4">スタイル</span></div>
<div class="b cmb" style="left:1074px;top:380px;width:617px;height:23px;"></div>
<div class="t dl" style="left:1079.5px;top:382px;">Round</div>
<svg class="i" style="left:1672px;top:389.25px" width="9" height="4.5" viewBox="0 0 9 4.5"><path d="M0 0H9L4.5 4.5Z" fill="#555"/></svg>
<div class="t dl" style="left:1074.5px;top:408px;">miter制限</div>
<svg class="i" style="left:1716.5px;top:74px" width="5" height="10" viewBox="0 0 5 10"><path d="M0 0V10L5 5Z" fill="#555"/></svg>
<div class="hd" style="left:1721px;top:246px;width:2px;height:17px;background-size:2px 3px"></div>
<div class="b " style="left:1730px;top:73px;width:116px;height:359px;background:#fff;border:1px solid #ababab"></div>
<div class="b " style="left:1828px;top:74px;width:17px;height:357px;background:#e2e2e2;border-left:1px solid #c4c4c4"></div>
<div class="b sbb" style="left:1828px;top:74px;width:17px;height:17px;"></div>
<svg class="i" style="left:1832px;top:80.25px" width="9" height="4.5" viewBox="0 0 9 4.5"><path d="M0 4.5H9L4.5 0Z" fill="#555"/></svg>
<div class="b sb" style="left:1828px;top:91px;width:17px;height:124px;"></div>
<div class="b sbb" style="left:1828px;top:414px;width:17px;height:17px;"></div>
<svg class="i" style="left:1832px;top:420.25px" width="9" height="4.5" viewBox="0 0 9 4.5"><path d="M0 0H9L4.5 4.5Z" fill="#555"/></svg>
<div class="t hh" style="left:1736.5px;top:77.5px;"><span class="k" style="--n:4">バッファ</span></div>
<div class="t hh" style="left:1733px;top:101.5px;"><span class="p" style="--n:1">（</span>buffer<span class="p" style="--n:1">）</span></div>
<div class="t hp" style="left:1735.5px;top:137px;"><span class="h" style="--n:2">この</span><span class="k" style="--n:5">アルゴリズ</span></div>
<div class="t hp" style="left:1735.5px;top:152px;"><span class="k" style="--n:1">ム</span><span class="h" style="--n:2">は、</span>固定距</div>
<div class="t hp" style="left:1735.5px;top:167px;">離<span class="h" style="--n:3">または</span><span class="p" style="--n:1">（</span>計算</div>
<div class="t hp" style="left:1735.5px;top:182px;"><span class="h" style="--n:1">で</span>求<span class="h" style="--n:2">める</span><span class="p" style="--n:1">）</span>動的</div>
<div class="t hp" style="left:1735.5px;top:197px;">距離<span class="h" style="--n:1">を</span>使用<span class="h" style="--n:1">し</span></div>
<div class="t hp" style="left:1735.5px;top:212px;"><span class="h" style="--n:2">て、</span>入力<span class="k" style="--n:3">レイヤ</span></div>
<div class="t hp" style="left:1735.5px;top:227px;">内<span class="h" style="--n:5">のすべての</span></div>
<div class="t hp" style="left:1735.5px;top:242px;">地物<span class="h" style="--n:1">の</span><span class="k" style="--n:4">バッファ</span></div>
<div class="t hp" style="left:1735.5px;top:257px;">領域<span class="h" style="--n:1">を</span>計算<span class="h" style="--n:1">し</span></div>
<div class="t hp" style="left:1735.5px;top:272px;"><span class="h" style="--n:3">ます。</span></div>
<div class="t hp" style="left:1735.5px;top:299px;"><span class="k" style="--n:7">セグメントパラ</span></div>
<div class="t hp" style="left:1735.5px;top:314px;"><span class="k" style="--n:3">メータ</span><span class="h" style="--n:2">は、</span><span class="k" style="--n:2">バッ</span></div>
<div class="t hp" style="left:1735.5px;top:329px;"><span class="k" style="--n:2">ファ</span>距離<span class="h" style="--n:1">を</span>計</div>
<div class="t hp" style="left:1735.5px;top:344px;">算<span class="h" style="--n:5">するために</span></div>
<div class="t hp" style="left:1735.5px;top:359px;">使用<span class="h" style="--n:2">する</span>四半</div>
<div class="t hp" style="left:1735.5px;top:374px;">円<span class="h" style="--n:1">の</span><span class="k" style="--n:5">セグメント</span></div>
<div class="t hp" style="left:1735.5px;top:389px;">数<span class="h" style="--n:1">を</span>制御<span class="h" style="--n:2">しま</span></div>
<div class="t hp" style="left:1735.5px;top:404px;"><span class="h" style="--n:2">す。</span></div>
<div class="b inp" style="left:1068px;top:461px;width:691px;height:23px;border-color:#bcbcbc"></div>
<div class="t dl" style="left:1403px;top:464px;letter-spacing:-.5px">0%</div>
<div class="b btn" style="left:1766px;top:461px;width:80px;height:24px;border-color:#cdcdcd;background:#f1f1f1"></div>
<div class="t dl dis ctr" style="left:1767px;top:463.5px;width:80px"><span class="k" style="--n:5">キャンセル</span></div>
<div class="b btn" style="left:1068px;top:492px;width:108px;height:24px;"></div>
<div class="t dl" style="left:1072.5px;top:494.5px;">詳細<span class="k" style="--n:5">パラメータ</span></div>
<svg class="i" style="left:1162.5px;top:503px" width="8" height="4" viewBox="0 0 8 4"><path d="M0 0H8L4 4Z" fill="#555"/></svg>
<div class="b btn" style="left:1183px;top:492px;width:139px;height:24px;"></div>
<div class="t dl" style="left:1187px;top:494.5px;"><span class="k" style="--n:7">バッチプロセス</span><span class="h" style="--n:1">で</span>実行...</div>
<div class="b btn" style="left:1592px;top:492px;width:80px;height:24px;"></div>
<div class="t dl ctr" style="left:1593px;top:494.5px;width:80px">実行</div>
<div class="b btn" style="left:1679px;top:492px;width:80px;height:24px;border-color:#3b9cf0;background:linear-gradient(#f4f9fe,#e3eefa)"></div>
<div class="t dl ctr" style="left:1680px;top:494.5px;width:80px">閉<span class="h" style="--n:2">じる</span></div>
<div class="b btn" style="left:1766px;top:492px;width:80px;height:24px;"></div>
<div class="t dl ctr" style="left:1767px;top:494.5px;width:80px"><span class="k" style="--n:3">ヘルプ</span></div>
</body></html>
